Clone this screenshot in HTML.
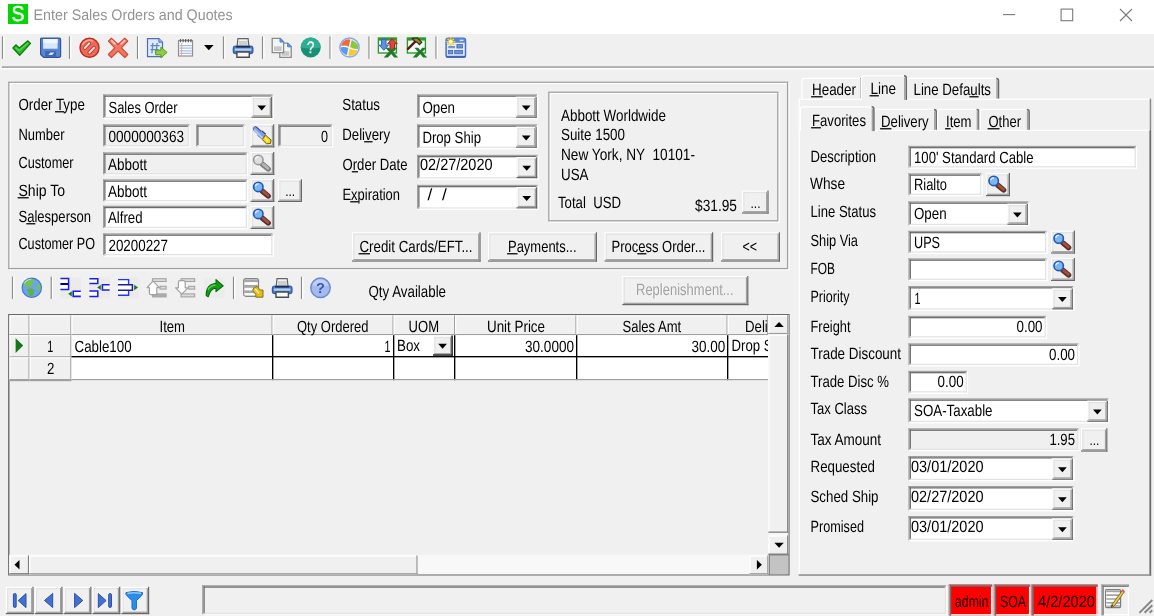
<!DOCTYPE html>
<html lang="en"><head><meta charset="utf-8"><title>Enter Sales Orders and Quotes</title>
<style>html,body{margin:0;padding:0;background:#f0f0f0;overflow:hidden}body{width:1154px;height:616px}svg{display:block;will-change:transform}svg text{font-family:"Liberation Sans",Arial,sans-serif;font-size:16.3px;white-space:pre;text-rendering:geometricPrecision}</style></head>
<body>
<svg width="1154" height="616" viewBox="0 0 1154 616">
<rect width="1154" height="616" fill="#f0f0f0"/>
<g id="titlebar">
<rect x="0" y="0" width="1154" height="34" fill="#ffffff"/>
<rect x="8" y="4" width="20" height="20" fill="#06d406"/>
<text x="18" y="21.2" textLength="13" lengthAdjust="spacingAndGlyphs" text-anchor="middle" fill="#fff" style="font-size:21.5px" stroke="#fff" stroke-width=".4">S</text>
<text x="33.6" y="20.3" textLength="199" lengthAdjust="spacingAndGlyphs" fill="#939393" style="font-size:15.3px">Enter Sales Orders and Quotes</text>
<path d="M1003 14.6 H1015.2" stroke="#7a7a7a" stroke-width="1.1" fill="none"/>
<rect x="1061.1" y="9.1" width="11.6" height="11.6" stroke="#7a7a7a" stroke-width="1.1" fill="none"/>
<path d="M1120 9 L1132 21 M1132 9 L1120 21" stroke="#7a7a7a" stroke-width="1.1" fill="none"/>
</g>
<g id="toolbar">
<rect x="1.9" y="66.2" width="1152.1" height="1.8" fill="#ababab"/>
<rect x="0" y="68" width="1154" height="1.25" fill="#fff"/>
<rect x="1.9" y="36.4" width="1.3" height="22.5" fill="#8e8e8e"/>
<rect x="3.2" y="36.4" width="1.25" height="22.5" fill="#fff"/>
<rect x="68.9" y="36.4" width="1.3" height="22.5" fill="#8e8e8e"/>
<rect x="70.2" y="36.4" width="1.25" height="22.5" fill="#fff"/>
<rect x="136.9" y="36.4" width="1.3" height="22.5" fill="#8e8e8e"/>
<rect x="138.2" y="36.4" width="1.25" height="22.5" fill="#fff"/>
<rect x="222.9" y="36.4" width="1.3" height="22.5" fill="#8e8e8e"/>
<rect x="224.2" y="36.4" width="1.25" height="22.5" fill="#fff"/>
<rect x="261.9" y="36.4" width="1.3" height="22.5" fill="#8e8e8e"/>
<rect x="263.2" y="36.4" width="1.25" height="22.5" fill="#fff"/>
<rect x="329.4" y="36.4" width="1.3" height="22.5" fill="#8e8e8e"/>
<rect x="330.7" y="36.4" width="1.25" height="22.5" fill="#fff"/>
<rect x="368.4" y="36.4" width="1.3" height="22.5" fill="#8e8e8e"/>
<rect x="369.7" y="36.4" width="1.25" height="22.5" fill="#fff"/>
<rect x="435.4" y="36.4" width="1.3" height="22.5" fill="#8e8e8e"/>
<rect x="436.7" y="36.4" width="1.25" height="22.5" fill="#fff"/>
<g transform="translate(11.5 39)">
<path d="M1.4 9 L4.4 5.8 L7.8 9 L16.4 1.8 L19 4.4 L8.2 16.4 Z" fill="#27b827" stroke="#0b7a0b" stroke-width="1.2" stroke-linejoin="round"/>
<path d="M4 8.6 L7.8 11.6 L16.4 4" fill="none" stroke="#6fe06f" stroke-width="1.4" opacity=".75"/>
</g>
<g transform="translate(40 37.5)">
<path d="M1.6 0.6 H19.4 Q20.6 0.6 20.6 1.8 V18.6 Q20.6 19.8 19.4 19.8 H3.6 L0.6 17 V1.8 Q0.6 0.6 1.6 0.6Z" fill="#5b84cf" stroke="#2f55a4" stroke-width="1.2"/>
<rect x="3.2" y="1.6" width="14.4" height="9.6" fill="#d6e9fb"/>
<rect x="3.2" y="1.6" width="14.4" height="4" fill="#eef6ff"/>
<rect x="5" y="13.6" width="11" height="6" rx="1" fill="#3f69b8"/>
<path d="M8.4 17.6 L10.4 15 H14.2 L12.2 17.6Z" fill="#dfeaf9"/>
</g>
<g transform="translate(79 37)">
<circle cx="10.5" cy="10.8" r="9.5" fill="#ec6a55" stroke="#bf2a1e" stroke-width="1.4"/>
<path d="M3.4 8 A7.6 7.6 0 0 1 14 4" fill="none" stroke="#f7a999" stroke-width="1.6"/>
<path d="M5.8 11 L10.2 6.4 M10.4 15.6 L15 10.8" stroke="#c5382b" stroke-width="3.8" stroke-linecap="round"/>
<path d="M5.8 11 L10.2 6.4 M10.4 15.6 L15 10.8" stroke="#f6e1dc" stroke-width="2" stroke-linecap="round"/>
</g>
<g transform="translate(108 37.3)">
<path d="M3.4 0.8 L10.1 7.2 L16.8 0.8 L19.8 3.8 L13.4 10.5 L19.8 17.2 L16.8 20.2 L10.1 13.8 L3.4 20.2 L0.4 17.2 L6.8 10.5 L0.4 3.8 Z" fill="#f27761" stroke="#d2483a" stroke-width="1.2" stroke-linejoin="round"/>
<path d="M3.6 3.4 L7 6.6 M16.6 3.4 L13.2 6.6" fill="none" stroke="#fcc9b9" stroke-width="1.8" stroke-linecap="round"/>
</g>
<g transform="translate(146.5 37.6)">
<path d="M1 1 H12.4 L16 4.6 V19 H1Z" fill="#dfe9f8" stroke="#4a70b6" stroke-width="1.2"/>
<path d="M12.4 1 V4.6 H16" fill="#9fbbe6" stroke="#4a70b6" stroke-width="1"/>
<path d="M4 8 H13 M4 12 H12 M6.4 5.4 L5.4 15.6 M10.6 5.4 L9.6 15.6" stroke="#5f86cf" stroke-width="1.3" fill="none"/>
<path d="M9.2 12.6 H14.4 V9.6 L20.6 14.8 L14.4 20.2 V17.2 H9.2Z" fill="#8fce3c" stroke="#5a9a1f" stroke-width="1"/>
</g>
<g transform="translate(177.5 38)">
<rect x="1" y="2.6" width="14" height="15.4" fill="#fdfdfd" stroke="#8f8f8f" stroke-width="1.2"/>
<path d="M3 1 V4.2 M5.6 1 V4.2 M8.2 1 V4.2 M10.8 1 V4.2 M13.4 1 V4.2" stroke="#5a5a5a" stroke-width="1.2"/>
<path d="M2 7.6 H14.2 M2 10.2 H14.2 M2 12.8 H14.2 M2 15.4 H14.2" stroke="#a9c0e6" stroke-width="1.3"/>
<path d="M4.2 5 V17.4" stroke="#eaa595" stroke-width="1"/>
</g>
<polygon points="204,45 213.6,45 208.8,50.2" fill="#000"/>
<g transform="translate(232.7 37.8)">
<path d="M5.2 0.8 H15.4 L16.2 8.6 H4.4Z" fill="#f2f2f2" stroke="#666" stroke-width="1.2"/>
<rect x="6" y="3.2" width="8.8" height="4.6" fill="#cfcfcf"/>
<rect x="0.6" y="8.2" width="19.6" height="7.6" rx="2.4" fill="#4b7fcc" stroke="#2d5ca8" stroke-width="1.2"/>
<path d="M3.4 9 H17.4" stroke="#1e2a44" stroke-width="1.5"/>
<rect x="2" y="10.8" width="16.8" height="2.2" rx="1" fill="#b4d0f4"/>
<path d="M4.2 14.2 H16.6 V19.4 H4.2Z" fill="#f8f8f8" stroke="#4a4a4a" stroke-width="1.4"/>
</g>
<g transform="translate(271.6 37.6)">
<path d="M8.2 5.6 h8 l3.4 3.4 v10.8 h-11.4Z" fill="#f4f4f4" stroke="#8a8a8a" stroke-width="1.3"/>
<rect x="10" y="13.6" width="7.6" height="4.6" fill="#c8c8c8"/>
<path d="M16 5.6 l3.6 3.6 h-3.6Z" fill="#5fa3f0" stroke="#3d86e0" stroke-width="1"/>
<path d="M0.6 0.8 h8 l3.4 3.4 v10.8 h-11.4Z" fill="#f4f4f4" stroke="#8a8a8a" stroke-width="1.3"/>
<rect x="2.4" y="8.8" width="7.6" height="4.6" fill="#c8c8c8"/>
<path d="M8.4 0.8 l3.6 3.6 h-3.6Z" fill="#5fa3f0" stroke="#3d86e0" stroke-width="1"/>
</g>
<g transform="translate(300.2 37)">
<circle cx="10.5" cy="10.5" r="10" fill="#189076"/>
<path d="M0.5 10.5 A10 10 0 0 1 20.5 10.5 Q10.5 12.6 0.5 10.5Z" fill="#2fae94"/>
<text x="10.5" y="16.4" style="font-size:16.5px" text-anchor="middle" textLength="7.4" lengthAdjust="spacingAndGlyphs" fill="#fff" stroke="#fff" stroke-width=".4" opacity=".92">?</text>
</g>
<g transform="translate(339 37)">
<circle cx="10.5" cy="10.5" r="9.6" fill="#f4f7fd" stroke="#8ea8e2" stroke-width="1.5"/>
<g transform="rotate(10 10.5 10.5)">
<path d="M3.2 5.6 Q6.6 2.2 10 2.6 L9.6 9.8 Q6 8.8 2 10.4 Q2 8 3.2 5.6Z" fill="#f26a3c"/>
<path d="M11.4 2.6 Q15 3.2 18 6.2 Q19.2 8.6 19 10.4 Q14.6 11.6 11 10Z" fill="#8ac83c"/>
<path d="M2 11.8 Q5.6 10.2 9.4 11.2 L9.2 18.6 Q4.8 17.8 2.8 14.8Z" fill="#5a9aea"/>
<path d="M10.8 11.4 Q14.4 12.8 19 11.8 Q18.2 16 14.8 18 Q12.4 18.8 10.6 18.6Z" fill="#f4cc30"/>
</g>
</g>
<g transform="translate(377.6 37.2)">
<rect x="0.8" y="0.8" width="18" height="15" fill="#f7fbf7" stroke="#2f9a2f" stroke-width="1.4"/>
<rect x="0.8" y="0.8" width="18" height="2.6" fill="#2f9a2f"/>
<path d="M4 2 H8.4 V8 H10.8 L6.2 13 L1.6 8 H4Z" fill="#5b93e0" stroke="#2f62b5" stroke-width="1"/>
<path d="M14.6 1.6 L19.6 6.6 H17 V12.6 H12.4 V6.6 H10Z" fill="#e0443c" stroke="#a61c1c" stroke-width="1"/>
<path d="M6 20.4 L11.4 14.6 L7.8 10.6 H11.6 L13.6 13 L15.8 10.6 H19.6 L15.6 14.8 L20.6 20.4 H16.6 L13.6 16.8 L10.2 20.4Z" fill="#1f7a2c"/>
</g>
<g transform="translate(406.6 37.2)">
<rect x="0.8" y="0.8" width="18" height="15" fill="#f7fbf7" stroke="#2f9a2f" stroke-width="1.4"/>
<rect x="0.8" y="0.8" width="18" height="2.6" fill="#2f9a2f"/>
<path d="M1.4 11.6 L9.6 3.4" stroke="#5a1a12" stroke-width="2.4" stroke-linecap="round"/>
<path d="M5.6 1.2 L10.6 0.6 L15.2 5 L12.8 7.4 L10.6 5.2 L8.6 4.4Z" fill="#8f8a2a" stroke="#2a2a10" stroke-width="1.1"/>
<path d="M6 20.4 L11.4 14.6 L7.8 10.6 H11.6 L13.6 13 L15.8 10.6 H19.6 L15.6 14.8 L20.6 20.4 H16.6 L13.6 16.8 L10.2 20.4Z" fill="#1f7a2c"/>
</g>
<g transform="translate(445.3 37.4)">
<rect x="0.8" y="0.8" width="19.4" height="19" rx="2" fill="#e4ecfa" stroke="#4a70c0" stroke-width="1.5"/>
<rect x="0.8" y="0.8" width="19.4" height="4.6" rx="1.6" fill="#5c84d4"/>
<path d="M14.4 3 H18.2" stroke="#dbe6fa" stroke-width="1.4"/>
<rect x="11.6" y="7.2" width="5.6" height="3.4" fill="#6f92d8" stroke="#3f66b8" stroke-width=".8"/>
<rect x="3" y="8.6" width="6.6" height="2.2" fill="#6f92d8"/>
<rect x="3" y="13" width="4.4" height="3.4" fill="#6f92d8" stroke="#3f66b8" stroke-width=".8"/>
<rect x="9.4" y="13" width="7.8" height="3.4" fill="#6f92d8" stroke="#3f66b8" stroke-width=".8"/>
<path d="M0.8 19.2 H20.2" stroke="#3f62ae" stroke-width="1.6"/>
<path d="M5.4 0 V8.4 M1 4.4 H10 M2.2 1.4 L8.6 7.4 M8.6 1.4 L2.2 7.4" stroke="#f6d21c" stroke-width="1.5"/>
<circle cx="5.4" cy="4.4" r="1.9" fill="#fffbe0"/>
</g>
</g>
<g id="order-header">
<rect x="10.07" y="83.47" width="778.75" height="186.35" fill="none" stroke="#fff" stroke-width="1.25"/>
<rect x="8.82" y="82.22" width="778.75" height="186.35" fill="none" stroke="#a0a0a0" stroke-width="1.25"/>
<text x="18.5" y="110" textLength="66.3" lengthAdjust="spacingAndGlyphs">Order Type</text>
<rect x="55.05" y="111.15" width="9.2" height="1.25" fill="#000"/>
<text x="18.5" y="140" textLength="46" lengthAdjust="spacingAndGlyphs">Number</text>
<text x="18.5" y="167.5" textLength="55" lengthAdjust="spacingAndGlyphs">Customer</text>
<text x="18.5" y="195.5" textLength="46.5" lengthAdjust="spacingAndGlyphs">Ship To</text>
<rect x="17.6" y="197.15" width="11.16" height="1.25" fill="#000"/>
<text x="18.5" y="222" textLength="72.5" lengthAdjust="spacingAndGlyphs">Salesperson</text>
<rect x="26.3" y="223.15" width="9.06" height="1.25" fill="#000"/>
<text x="18.5" y="248.8" textLength="76.5" lengthAdjust="spacingAndGlyphs">Customer PO</text>
<rect x="103" y="94.3" width="170.75" height="24.95" fill="#fff"/>
<rect x="103" y="94.3" width="170.75" height="1.25" fill="#a0a0a0"/>
<rect x="103" y="94.3" width="1.25" height="24.95" fill="#a0a0a0"/>
<rect x="103" y="118" width="170.75" height="1.25" fill="#ffffff"/>
<rect x="272.5" y="94.3" width="1.25" height="24.95" fill="#ffffff"/>
<rect x="104.25" y="95.55" width="168.25" height="1.25" fill="#696969"/>
<rect x="104.25" y="95.55" width="1.25" height="22.45" fill="#696969"/>
<rect x="104.25" y="116.75" width="168.25" height="1.25" fill="#e3e3e3"/>
<rect x="271.25" y="95.55" width="1.25" height="22.45" fill="#e3e3e3"/>
<rect x="251.6" y="96.8" width="20.6" height="21" fill="#f0f0f0"/>
<rect x="251.6" y="96.8" width="20.6" height="1.25" fill="#ffffff"/>
<rect x="251.6" y="96.8" width="1.25" height="21" fill="#ffffff"/>
<rect x="251.6" y="116.55" width="20.6" height="1.25" fill="#696969"/>
<rect x="270.95" y="96.8" width="1.25" height="21" fill="#696969"/>
<rect x="252.85" y="98.05" width="18.1" height="1.25" fill="#e3e3e3"/>
<rect x="252.85" y="98.05" width="1.25" height="18.5" fill="#e3e3e3"/>
<rect x="252.85" y="115.3" width="18.1" height="1.25" fill="#a0a0a0"/>
<rect x="269.7" y="98.05" width="1.25" height="18.5" fill="#a0a0a0"/>
<polygon points="257.32,105.4 266.07,105.4 261.7,110.4" fill="#000"/>
<text x="108.5" y="113" textLength="69" lengthAdjust="spacingAndGlyphs">Sales Order</text>
<rect x="103" y="124.3" width="87.4" height="23.2" fill="#f0f0f0"/>
<rect x="103" y="124.3" width="87.4" height="1.25" fill="#a0a0a0"/>
<rect x="103" y="124.3" width="1.25" height="23.2" fill="#a0a0a0"/>
<rect x="103" y="146.25" width="87.4" height="1.25" fill="#ffffff"/>
<rect x="189.15" y="124.3" width="1.25" height="23.2" fill="#ffffff"/>
<rect x="104.25" y="125.55" width="84.9" height="1.25" fill="#696969"/>
<rect x="104.25" y="125.55" width="1.25" height="20.7" fill="#696969"/>
<rect x="104.25" y="145" width="84.9" height="1.25" fill="#e3e3e3"/>
<rect x="187.9" y="125.55" width="1.25" height="20.7" fill="#e3e3e3"/>
<text x="108.5" y="141.6" textLength="75.5" lengthAdjust="spacingAndGlyphs">0000000363</text>
<rect x="196" y="124.3" width="49.4" height="23.2" fill="#f0f0f0"/>
<rect x="196" y="124.3" width="49.4" height="1.25" fill="#a0a0a0"/>
<rect x="196" y="124.3" width="1.25" height="23.2" fill="#a0a0a0"/>
<rect x="196" y="146.25" width="49.4" height="1.25" fill="#ffffff"/>
<rect x="244.15" y="124.3" width="1.25" height="23.2" fill="#ffffff"/>
<rect x="197.25" y="125.55" width="46.9" height="1.25" fill="#696969"/>
<rect x="197.25" y="125.55" width="1.25" height="20.7" fill="#696969"/>
<rect x="197.25" y="145" width="46.9" height="1.25" fill="#e3e3e3"/>
<rect x="242.9" y="125.55" width="1.25" height="20.7" fill="#e3e3e3"/>
<rect x="250.6" y="124.3" width="23.7" height="23.1" fill="#f0f0f0"/>
<rect x="250.6" y="124.3" width="23.7" height="1.25" fill="#ffffff"/>
<rect x="250.6" y="124.3" width="1.25" height="23.1" fill="#ffffff"/>
<rect x="250.6" y="146.15" width="23.7" height="1.25" fill="#696969"/>
<rect x="273.05" y="124.3" width="1.25" height="23.1" fill="#696969"/>
<rect x="251.85" y="125.55" width="21.2" height="1.25" fill="#e3e3e3"/>
<rect x="251.85" y="125.55" width="1.25" height="20.6" fill="#e3e3e3"/>
<rect x="251.85" y="144.9" width="21.2" height="1.25" fill="#a0a0a0"/>
<rect x="271.8" y="125.55" width="1.25" height="20.6" fill="#a0a0a0"/>
<g transform="translate(250.9 124.25)">
<path d="M4.6 4.6 L8.6 8.4" stroke="#2c3f78" stroke-width="5" stroke-linecap="round"/>
<path d="M8.8 8.6 L13 12.2" stroke="#2c3f78" stroke-width="7" stroke-linecap="butt"/>
<path d="M4.4 4.8 L8.4 8.6" stroke="#7f9fe2" stroke-width="3.8" stroke-linecap="round"/>
<path d="M8.4 9 L12.6 12.6" stroke="#7f9fe2" stroke-width="5.8" stroke-linecap="butt"/>
<path d="M3.8 5.8 L11.4 13.4" stroke="#b9cdf4" stroke-width="1.6" stroke-linecap="round"/>
<path d="M14.6 10.8 L20.2 15.8 L19.6 19.2 L15.6 19.6 L11.4 15.2Z" fill="#f8d80c" stroke="#5a4a10" stroke-width=".9" stroke-linejoin="round"/>
<path d="M14.4 14 L17.4 17.4" stroke="#fff27a" stroke-width="1.6"/>
</g>
<rect x="278" y="124.3" width="55.2" height="23.2" fill="#f0f0f0"/>
<rect x="278" y="124.3" width="55.2" height="1.25" fill="#a0a0a0"/>
<rect x="278" y="124.3" width="1.25" height="23.2" fill="#a0a0a0"/>
<rect x="278" y="146.25" width="55.2" height="1.25" fill="#ffffff"/>
<rect x="331.95" y="124.3" width="1.25" height="23.2" fill="#ffffff"/>
<rect x="279.25" y="125.55" width="52.7" height="1.25" fill="#696969"/>
<rect x="279.25" y="125.55" width="1.25" height="20.7" fill="#696969"/>
<rect x="279.25" y="145" width="52.7" height="1.25" fill="#e3e3e3"/>
<rect x="330.7" y="125.55" width="1.25" height="20.7" fill="#e3e3e3"/>
<text x="321" y="141.6" textLength="7" lengthAdjust="spacingAndGlyphs">0</text>
<rect x="103" y="152.3" width="145.2" height="23.2" fill="#f0f0f0"/>
<rect x="103" y="152.3" width="145.2" height="1.25" fill="#a0a0a0"/>
<rect x="103" y="152.3" width="1.25" height="23.2" fill="#a0a0a0"/>
<rect x="103" y="174.25" width="145.2" height="1.25" fill="#ffffff"/>
<rect x="246.95" y="152.3" width="1.25" height="23.2" fill="#ffffff"/>
<rect x="104.25" y="153.55" width="142.7" height="1.25" fill="#696969"/>
<rect x="104.25" y="153.55" width="1.25" height="20.7" fill="#696969"/>
<rect x="104.25" y="173" width="142.7" height="1.25" fill="#e3e3e3"/>
<rect x="245.7" y="153.55" width="1.25" height="20.7" fill="#e3e3e3"/>
<text x="108" y="169.6" textLength="39" lengthAdjust="spacingAndGlyphs">Abbott</text>
<rect x="250.6" y="152" width="23.7" height="23" fill="#f0f0f0"/>
<rect x="250.6" y="152" width="23.7" height="1.25" fill="#ffffff"/>
<rect x="250.6" y="152" width="1.25" height="23" fill="#ffffff"/>
<rect x="250.6" y="173.75" width="23.7" height="1.25" fill="#696969"/>
<rect x="273.05" y="152" width="1.25" height="23" fill="#696969"/>
<rect x="251.85" y="153.25" width="21.2" height="1.25" fill="#e3e3e3"/>
<rect x="251.85" y="153.25" width="1.25" height="20.5" fill="#e3e3e3"/>
<rect x="251.85" y="172.5" width="21.2" height="1.25" fill="#a0a0a0"/>
<rect x="271.8" y="153.25" width="1.25" height="20.5" fill="#a0a0a0"/>
<g transform="translate(250.6 152)">
<path d="M12 12.4 L17.6 17" stroke="#7c7c7c" stroke-width="5.4" stroke-linecap="round"/>
<path d="M12.6 12.4 L17.4 16.4" stroke="#b4b4b4" stroke-width="2.8" stroke-linecap="round"/>
<circle cx="7.7" cy="7.9" r="4.7" fill="#dedede" stroke="#989898" stroke-width="1.6"/>
<path d="M4.8 7.4 A3 3 0 0 1 8 4.8" stroke="#fff" stroke-width="1.3" fill="none" opacity=".75"/>
</g>
<rect x="103" y="179.3" width="145.2" height="23.2" fill="#fff"/>
<rect x="103" y="179.3" width="145.2" height="1.25" fill="#a0a0a0"/>
<rect x="103" y="179.3" width="1.25" height="23.2" fill="#a0a0a0"/>
<rect x="103" y="201.25" width="145.2" height="1.25" fill="#ffffff"/>
<rect x="246.95" y="179.3" width="1.25" height="23.2" fill="#ffffff"/>
<rect x="104.25" y="180.55" width="142.7" height="1.25" fill="#696969"/>
<rect x="104.25" y="180.55" width="1.25" height="20.7" fill="#696969"/>
<rect x="104.25" y="200" width="142.7" height="1.25" fill="#e3e3e3"/>
<rect x="245.7" y="180.55" width="1.25" height="20.7" fill="#e3e3e3"/>
<text x="108" y="197" textLength="39" lengthAdjust="spacingAndGlyphs">Abbott</text>
<rect x="250.6" y="179" width="23.7" height="23" fill="#f0f0f0"/>
<rect x="250.6" y="179" width="23.7" height="1.25" fill="#ffffff"/>
<rect x="250.6" y="179" width="1.25" height="23" fill="#ffffff"/>
<rect x="250.6" y="200.75" width="23.7" height="1.25" fill="#696969"/>
<rect x="273.05" y="179" width="1.25" height="23" fill="#696969"/>
<rect x="251.85" y="180.25" width="21.2" height="1.25" fill="#e3e3e3"/>
<rect x="251.85" y="180.25" width="1.25" height="20.5" fill="#e3e3e3"/>
<rect x="251.85" y="199.5" width="21.2" height="1.25" fill="#a0a0a0"/>
<rect x="271.8" y="180.25" width="1.25" height="20.5" fill="#a0a0a0"/>
<g transform="translate(250.6 179)">
<path d="M12 12.4 L17.6 17" stroke="#5e2d25" stroke-width="5.4" stroke-linecap="round"/>
<path d="M12.6 12.4 L17.4 16.4" stroke="#a0503f" stroke-width="2.8" stroke-linecap="round"/>
<circle cx="7.7" cy="7.9" r="4.7" fill="#7ab6f2" stroke="#2458b0" stroke-width="1.6"/>
<path d="M4.8 7.4 A3 3 0 0 1 8 4.8" stroke="#fff" stroke-width="1.3" fill="none" opacity=".75"/>
</g>
<rect x="278" y="179.3" width="24" height="22.7" fill="#f0f0f0"/>
<rect x="278" y="179.3" width="24" height="1.25" fill="#ffffff"/>
<rect x="278" y="179.3" width="1.25" height="22.7" fill="#ffffff"/>
<rect x="278" y="200.75" width="24" height="1.25" fill="#696969"/>
<rect x="300.75" y="179.3" width="1.25" height="22.7" fill="#696969"/>
<rect x="279.25" y="180.55" width="21.5" height="1.25" fill="#e3e3e3"/>
<rect x="279.25" y="180.55" width="1.25" height="20.2" fill="#e3e3e3"/>
<rect x="279.25" y="199.5" width="21.5" height="1.25" fill="#a0a0a0"/>
<rect x="299.5" y="180.55" width="1.25" height="20.2" fill="#a0a0a0"/>
<text x="290.2" y="196.05" textLength="10" lengthAdjust="spacingAndGlyphs" text-anchor="middle" style="font-size:14px">...</text>
<rect x="103" y="205.7" width="145.2" height="23.6" fill="#fff"/>
<rect x="103" y="205.7" width="145.2" height="1.25" fill="#a0a0a0"/>
<rect x="103" y="205.7" width="1.25" height="23.6" fill="#a0a0a0"/>
<rect x="103" y="228.05" width="145.2" height="1.25" fill="#ffffff"/>
<rect x="246.95" y="205.7" width="1.25" height="23.6" fill="#ffffff"/>
<rect x="104.25" y="206.95" width="142.7" height="1.25" fill="#696969"/>
<rect x="104.25" y="206.95" width="1.25" height="21.1" fill="#696969"/>
<rect x="104.25" y="226.8" width="142.7" height="1.25" fill="#e3e3e3"/>
<rect x="245.7" y="206.95" width="1.25" height="21.1" fill="#e3e3e3"/>
<text x="108" y="223" textLength="34.5" lengthAdjust="spacingAndGlyphs">Alfred</text>
<rect x="250.6" y="206" width="23.7" height="23" fill="#f0f0f0"/>
<rect x="250.6" y="206" width="23.7" height="1.25" fill="#ffffff"/>
<rect x="250.6" y="206" width="1.25" height="23" fill="#ffffff"/>
<rect x="250.6" y="227.75" width="23.7" height="1.25" fill="#696969"/>
<rect x="273.05" y="206" width="1.25" height="23" fill="#696969"/>
<rect x="251.85" y="207.25" width="21.2" height="1.25" fill="#e3e3e3"/>
<rect x="251.85" y="207.25" width="1.25" height="20.5" fill="#e3e3e3"/>
<rect x="251.85" y="226.5" width="21.2" height="1.25" fill="#a0a0a0"/>
<rect x="271.8" y="207.25" width="1.25" height="20.5" fill="#a0a0a0"/>
<g transform="translate(250.6 206)">
<path d="M12 12.4 L17.6 17" stroke="#5e2d25" stroke-width="5.4" stroke-linecap="round"/>
<path d="M12.6 12.4 L17.4 16.4" stroke="#a0503f" stroke-width="2.8" stroke-linecap="round"/>
<circle cx="7.7" cy="7.9" r="4.7" fill="#7ab6f2" stroke="#2458b0" stroke-width="1.6"/>
<path d="M4.8 7.4 A3 3 0 0 1 8 4.8" stroke="#fff" stroke-width="1.3" fill="none" opacity=".75"/>
</g>
<rect x="103" y="233.3" width="170.7" height="23.2" fill="#fff"/>
<rect x="103" y="233.3" width="170.7" height="1.25" fill="#a0a0a0"/>
<rect x="103" y="233.3" width="1.25" height="23.2" fill="#a0a0a0"/>
<rect x="103" y="255.25" width="170.7" height="1.25" fill="#ffffff"/>
<rect x="272.45" y="233.3" width="1.25" height="23.2" fill="#ffffff"/>
<rect x="104.25" y="234.55" width="168.2" height="1.25" fill="#696969"/>
<rect x="104.25" y="234.55" width="1.25" height="20.7" fill="#696969"/>
<rect x="104.25" y="254" width="168.2" height="1.25" fill="#e3e3e3"/>
<rect x="271.2" y="234.55" width="1.25" height="20.7" fill="#e3e3e3"/>
<text x="108.5" y="250.6" textLength="59.5" lengthAdjust="spacingAndGlyphs">20200227</text>
<text x="342.3" y="110" textLength="37.7" lengthAdjust="spacingAndGlyphs">Status</text>
<text x="342.3" y="140.3" textLength="47.7" lengthAdjust="spacingAndGlyphs">Delivery</text>
<rect x="364.15" y="141.15" width="8.42" height="1.25" fill="#000"/>
<text x="342.5" y="170" textLength="65" lengthAdjust="spacingAndGlyphs">Order Date</text>
<rect x="351.81" y="171.15" width="6.19" height="1.25" fill="#000"/>
<text x="342.5" y="200" textLength="57.5" lengthAdjust="spacingAndGlyphs">Expiration</text>
<rect x="350.22" y="201.15" width="8.28" height="1.25" fill="#000"/>
<rect x="417" y="94.3" width="121.25" height="24.95" fill="#fff"/>
<rect x="417" y="94.3" width="121.25" height="1.25" fill="#a0a0a0"/>
<rect x="417" y="94.3" width="1.25" height="24.95" fill="#a0a0a0"/>
<rect x="417" y="118" width="121.25" height="1.25" fill="#ffffff"/>
<rect x="537" y="94.3" width="1.25" height="24.95" fill="#ffffff"/>
<rect x="418.25" y="95.55" width="118.75" height="1.25" fill="#696969"/>
<rect x="418.25" y="95.55" width="1.25" height="22.45" fill="#696969"/>
<rect x="418.25" y="116.75" width="118.75" height="1.25" fill="#e3e3e3"/>
<rect x="535.75" y="95.55" width="1.25" height="22.45" fill="#e3e3e3"/>
<rect x="516.1" y="96.8" width="20.6" height="21" fill="#f0f0f0"/>
<rect x="516.1" y="96.8" width="20.6" height="1.25" fill="#ffffff"/>
<rect x="516.1" y="96.8" width="1.25" height="21" fill="#ffffff"/>
<rect x="516.1" y="116.55" width="20.6" height="1.25" fill="#696969"/>
<rect x="535.45" y="96.8" width="1.25" height="21" fill="#696969"/>
<rect x="517.35" y="98.05" width="18.1" height="1.25" fill="#e3e3e3"/>
<rect x="517.35" y="98.05" width="1.25" height="18.5" fill="#e3e3e3"/>
<rect x="517.35" y="115.3" width="18.1" height="1.25" fill="#a0a0a0"/>
<rect x="534.2" y="98.05" width="1.25" height="18.5" fill="#a0a0a0"/>
<polygon points="521.83,105.4 530.58,105.4 526.2,110.4" fill="#000"/>
<text x="422.4" y="113" textLength="32.6" lengthAdjust="spacingAndGlyphs">Open</text>
<rect x="417" y="124.3" width="121.25" height="24.95" fill="#fff"/>
<rect x="417" y="124.3" width="121.25" height="1.25" fill="#a0a0a0"/>
<rect x="417" y="124.3" width="1.25" height="24.95" fill="#a0a0a0"/>
<rect x="417" y="148" width="121.25" height="1.25" fill="#ffffff"/>
<rect x="537" y="124.3" width="1.25" height="24.95" fill="#ffffff"/>
<rect x="418.25" y="125.55" width="118.75" height="1.25" fill="#696969"/>
<rect x="418.25" y="125.55" width="1.25" height="22.45" fill="#696969"/>
<rect x="418.25" y="146.75" width="118.75" height="1.25" fill="#e3e3e3"/>
<rect x="535.75" y="125.55" width="1.25" height="22.45" fill="#e3e3e3"/>
<rect x="516.1" y="126.8" width="20.6" height="21" fill="#f0f0f0"/>
<rect x="516.1" y="126.8" width="20.6" height="1.25" fill="#ffffff"/>
<rect x="516.1" y="126.8" width="1.25" height="21" fill="#ffffff"/>
<rect x="516.1" y="146.55" width="20.6" height="1.25" fill="#696969"/>
<rect x="535.45" y="126.8" width="1.25" height="21" fill="#696969"/>
<rect x="517.35" y="128.05" width="18.1" height="1.25" fill="#e3e3e3"/>
<rect x="517.35" y="128.05" width="1.25" height="18.5" fill="#e3e3e3"/>
<rect x="517.35" y="145.3" width="18.1" height="1.25" fill="#a0a0a0"/>
<rect x="534.2" y="128.05" width="1.25" height="18.5" fill="#a0a0a0"/>
<polygon points="521.83,135.4 530.58,135.4 526.2,140.4" fill="#000"/>
<text x="422.4" y="143" textLength="58.6" lengthAdjust="spacingAndGlyphs">Drop Ship</text>
<rect x="417" y="154.8" width="121.75" height="24.85" fill="#fff"/>
<rect x="417" y="154.8" width="121.75" height="1.25" fill="#a0a0a0"/>
<rect x="417" y="154.8" width="1.25" height="24.85" fill="#a0a0a0"/>
<rect x="417" y="178.4" width="121.75" height="1.25" fill="#ffffff"/>
<rect x="537.5" y="154.8" width="1.25" height="24.85" fill="#ffffff"/>
<rect x="418.25" y="156.05" width="119.25" height="1.25" fill="#696969"/>
<rect x="418.25" y="156.05" width="1.25" height="22.35" fill="#696969"/>
<rect x="418.25" y="177.15" width="119.25" height="1.25" fill="#e3e3e3"/>
<rect x="536.25" y="156.05" width="1.25" height="22.35" fill="#e3e3e3"/>
<rect x="516.6" y="157.3" width="20.6" height="20.9" fill="#f0f0f0"/>
<rect x="516.6" y="157.3" width="20.6" height="1.25" fill="#ffffff"/>
<rect x="516.6" y="157.3" width="1.25" height="20.9" fill="#ffffff"/>
<rect x="516.6" y="176.95" width="20.6" height="1.25" fill="#696969"/>
<rect x="535.95" y="157.3" width="1.25" height="20.9" fill="#696969"/>
<rect x="517.85" y="158.55" width="18.1" height="1.25" fill="#e3e3e3"/>
<rect x="517.85" y="158.55" width="1.25" height="18.4" fill="#e3e3e3"/>
<rect x="517.85" y="175.7" width="18.1" height="1.25" fill="#a0a0a0"/>
<rect x="534.7" y="158.55" width="1.25" height="18.4" fill="#a0a0a0"/>
<polygon points="522.33,165.85 531.08,165.85 526.7,170.85" fill="#000"/>
<text x="420" y="170" textLength="72.5" lengthAdjust="spacingAndGlyphs">02/27/2020</text>
<rect x="417" y="184.8" width="121.75" height="25.05" fill="#fff"/>
<rect x="417" y="184.8" width="121.75" height="1.25" fill="#a0a0a0"/>
<rect x="417" y="184.8" width="1.25" height="25.05" fill="#a0a0a0"/>
<rect x="417" y="208.6" width="121.75" height="1.25" fill="#ffffff"/>
<rect x="537.5" y="184.8" width="1.25" height="25.05" fill="#ffffff"/>
<rect x="418.25" y="186.05" width="119.25" height="1.25" fill="#696969"/>
<rect x="418.25" y="186.05" width="1.25" height="22.55" fill="#696969"/>
<rect x="418.25" y="207.35" width="119.25" height="1.25" fill="#e3e3e3"/>
<rect x="536.25" y="186.05" width="1.25" height="22.55" fill="#e3e3e3"/>
<rect x="516.6" y="187.3" width="20.6" height="21.1" fill="#f0f0f0"/>
<rect x="516.6" y="187.3" width="20.6" height="1.25" fill="#ffffff"/>
<rect x="516.6" y="187.3" width="1.25" height="21.1" fill="#ffffff"/>
<rect x="516.6" y="207.15" width="20.6" height="1.25" fill="#696969"/>
<rect x="535.95" y="187.3" width="1.25" height="21.1" fill="#696969"/>
<rect x="517.85" y="188.55" width="18.1" height="1.25" fill="#e3e3e3"/>
<rect x="517.85" y="188.55" width="1.25" height="18.6" fill="#e3e3e3"/>
<rect x="517.85" y="205.9" width="18.1" height="1.25" fill="#a0a0a0"/>
<rect x="534.7" y="188.55" width="1.25" height="18.6" fill="#a0a0a0"/>
<polygon points="522.33,195.95 531.08,195.95 526.7,200.95" fill="#000"/>
<text x="427.6" y="200" textLength="19.2" lengthAdjust="spacingAndGlyphs" xml:space="preserve">/  /</text>
<rect x="550.08" y="93.47" width="228.95" height="128.55" fill="none" stroke="#fff" stroke-width="1.25"/>
<rect x="548.83" y="92.22" width="228.95" height="128.55" fill="none" stroke="#a0a0a0" stroke-width="1.25"/>
<text x="561" y="120.5" textLength="105" lengthAdjust="spacingAndGlyphs">Abbott Worldwide</text>
<text x="561" y="140" textLength="64" lengthAdjust="spacingAndGlyphs">Suite 1500</text>
<text x="561" y="160" textLength="134" lengthAdjust="spacingAndGlyphs" xml:space="preserve">New York, NY  10101-</text>
<text x="561" y="180" textLength="27.5" lengthAdjust="spacingAndGlyphs">USA</text>
<text x="558" y="207.5" textLength="63" lengthAdjust="spacingAndGlyphs" xml:space="preserve">Total  USD</text>
<text x="695" y="211" textLength="42" lengthAdjust="spacingAndGlyphs">$31.95</text>
<rect x="742" y="190.6" width="26.6" height="23" fill="#f0f0f0"/>
<rect x="742" y="190.6" width="26.6" height="1.25" fill="#ffffff"/>
<rect x="742" y="190.6" width="1.25" height="23" fill="#ffffff"/>
<rect x="742" y="212.35" width="26.6" height="1.25" fill="#696969"/>
<rect x="767.35" y="190.6" width="1.25" height="23" fill="#696969"/>
<rect x="743.25" y="191.85" width="24.1" height="1.25" fill="#e3e3e3"/>
<rect x="743.25" y="191.85" width="1.25" height="20.5" fill="#e3e3e3"/>
<rect x="743.25" y="211.1" width="24.1" height="1.25" fill="#a0a0a0"/>
<rect x="766.1" y="191.85" width="1.25" height="20.5" fill="#a0a0a0"/>
<text x="755.5" y="207.5" textLength="10" lengthAdjust="spacingAndGlyphs" text-anchor="middle" style="font-size:14px">...</text>
<rect x="352" y="232.3" width="128.6" height="29.3" fill="#f0f0f0"/>
<rect x="352" y="232.3" width="128.6" height="1.25" fill="#ffffff"/>
<rect x="352" y="232.3" width="1.25" height="29.3" fill="#ffffff"/>
<rect x="352" y="260.35" width="128.6" height="1.25" fill="#696969"/>
<rect x="479.35" y="232.3" width="1.25" height="29.3" fill="#696969"/>
<rect x="353.25" y="233.55" width="126.1" height="1.25" fill="#e3e3e3"/>
<rect x="353.25" y="233.55" width="1.25" height="26.8" fill="#e3e3e3"/>
<rect x="353.25" y="259.1" width="126.1" height="1.25" fill="#a0a0a0"/>
<rect x="478.1" y="233.55" width="1.25" height="26.8" fill="#a0a0a0"/>
<text x="359.5" y="252.15" textLength="113" lengthAdjust="spacingAndGlyphs">Credit Cards/EFT...</text>
<rect x="358.6" y="253.15" width="11.4" height="1.25" fill="#000"/>
<rect x="488" y="232.3" width="109" height="29.3" fill="#f0f0f0"/>
<rect x="488" y="232.3" width="109" height="1.25" fill="#ffffff"/>
<rect x="488" y="232.3" width="1.25" height="29.3" fill="#ffffff"/>
<rect x="488" y="260.35" width="109" height="1.25" fill="#696969"/>
<rect x="595.75" y="232.3" width="1.25" height="29.3" fill="#696969"/>
<rect x="489.25" y="233.55" width="106.5" height="1.25" fill="#e3e3e3"/>
<rect x="489.25" y="233.55" width="1.25" height="26.8" fill="#e3e3e3"/>
<rect x="489.25" y="259.1" width="106.5" height="1.25" fill="#a0a0a0"/>
<rect x="594.5" y="233.55" width="1.25" height="26.8" fill="#a0a0a0"/>
<text x="508" y="252.15" textLength="68.5" lengthAdjust="spacingAndGlyphs">Payments...</text>
<rect x="507.1" y="253.15" width="10.47" height="1.25" fill="#000"/>
<rect x="604.5" y="232.3" width="108.7" height="29.3" fill="#f0f0f0"/>
<rect x="604.5" y="232.3" width="108.7" height="1.25" fill="#ffffff"/>
<rect x="604.5" y="232.3" width="1.25" height="29.3" fill="#ffffff"/>
<rect x="604.5" y="260.35" width="108.7" height="1.25" fill="#696969"/>
<rect x="711.95" y="232.3" width="1.25" height="29.3" fill="#696969"/>
<rect x="605.75" y="233.55" width="106.2" height="1.25" fill="#e3e3e3"/>
<rect x="605.75" y="233.55" width="1.25" height="26.8" fill="#e3e3e3"/>
<rect x="605.75" y="259.1" width="106.2" height="1.25" fill="#a0a0a0"/>
<rect x="710.7" y="233.55" width="1.25" height="26.8" fill="#a0a0a0"/>
<text x="611.5" y="252.15" textLength="94" lengthAdjust="spacingAndGlyphs">Process Order...</text>
<rect x="637.34" y="253.15" width="9.05" height="1.25" fill="#000"/>
<rect x="721" y="232.3" width="59" height="29.3" fill="#f0f0f0"/>
<rect x="721" y="232.3" width="59" height="1.25" fill="#ffffff"/>
<rect x="721" y="232.3" width="1.25" height="29.3" fill="#ffffff"/>
<rect x="721" y="260.35" width="59" height="1.25" fill="#696969"/>
<rect x="778.75" y="232.3" width="1.25" height="29.3" fill="#696969"/>
<rect x="722.25" y="233.55" width="56.5" height="1.25" fill="#e3e3e3"/>
<rect x="722.25" y="233.55" width="1.25" height="26.8" fill="#e3e3e3"/>
<rect x="722.25" y="259.1" width="56.5" height="1.25" fill="#a0a0a0"/>
<rect x="777.5" y="233.55" width="1.25" height="26.8" fill="#a0a0a0"/>
<text x="742.5" y="252.15" textLength="14.5" lengthAdjust="spacingAndGlyphs">&lt;&lt;</text>
</g>
<g id="line-toolbar">
<rect x="11.9" y="276.6" width="1.3" height="22.4" fill="#8e8e8e"/>
<rect x="13.2" y="276.6" width="1.25" height="22.4" fill="#fff"/>
<rect x="50.6" y="276.6" width="1.3" height="22.4" fill="#8e8e8e"/>
<rect x="51.9" y="276.6" width="1.25" height="22.4" fill="#fff"/>
<rect x="232.9" y="276.6" width="1.3" height="22.4" fill="#8e8e8e"/>
<rect x="234.2" y="276.6" width="1.25" height="22.4" fill="#fff"/>
<rect x="300.9" y="276.6" width="1.3" height="22.4" fill="#8e8e8e"/>
<rect x="302.2" y="276.6" width="1.25" height="22.4" fill="#fff"/>
<g transform="translate(21.3 277.3)">
<circle cx="10.5" cy="10.5" r="9.7" fill="#6ea2ee" stroke="#3f74d2" stroke-width="1.1"/>
<path d="M4.4 3.6 Q8 1 12 1.8 L13.4 4.4 L10.6 5.6 L11.6 8.4 L8.4 10 L5.6 8.6 L3 9.4 L2 6.8Z" fill="#72c64e"/>
<path d="M6.2 11.6 L10.4 11 L13 13.2 L12.2 17 L9.6 19.4 L7.2 17.6 L7.4 14.6 L5.4 13Z" fill="#5cb440"/>
<path d="M15.6 6.4 L18.8 7.6 L19.4 11.6 L17 13.6 L15.4 10.6Z" fill="#72c64e"/>
<path d="M2.8 6.2 A9 9 0 0 1 10 1.8" stroke="#cfe3fb" stroke-width="1.2" fill="none" opacity=".7"/>
</g>
<g transform="translate(60 277.6)">
<rect x="0" y="0" width="21" height="20.6" fill="#e7e7e7" opacity=".6"/>
<rect x="0.4" y="1" width="8.2" height="10.8" fill="#fff"/>
<path d="M0.4 1 H8.6 V11.8 H0.4" fill="none" stroke="#1c1cf0" stroke-width="1.5"/>
<path d="M0.4 6.4 H8.2" stroke="#00007a" stroke-width="2"/>
<rect x="13.2" y="13.8" width="7.6" height="4.8" fill="#fff"/>
<path d="M20.8 13.6 H13.2 V18.8 H20.8" fill="none" stroke="#1c1cf0" stroke-width="1.6"/>
<path d="M8.2 16.2 L11.8 13.6 V18.8Z" fill="#157a15"/>
</g>
<g transform="translate(89 277.6)">
<rect x="0" y="0" width="21" height="20.6" fill="#e7e7e7" opacity=".6"/>
<rect x="0.4" y="1.2" width="8.4" height="4.8" fill="#fff"/><rect x="0.4" y="13.6" width="8.4" height="5" fill="#fff"/>
<path d="M0.4 1.2 H8.8 V6 H0.4 M0.4 13.4 H8.8 V18.8 H0.4" fill="none" stroke="#1c1cf0" stroke-width="1.5"/>
<rect x="13.4" y="7.4" width="7.2" height="4.8" fill="#fff"/>
<path d="M20.6 7.2 H13.4 V12.4 H20.6" fill="none" stroke="#1c1cf0" stroke-width="1.6"/>
<path d="M8.2 9.8 L11.8 7.2 V12.4Z" fill="#157a15"/>
</g>
<g transform="translate(118 277.6)">
<rect x="0" y="0" width="21" height="20.6" fill="#e7e7e7" opacity=".6"/>
<rect x="0" y="2" width="10.6" height="15.6" fill="#fff"/>
<path d="M0 2 H10.6 V17.6 H0" fill="none" stroke="#2436f0" stroke-width="1.4"/>
<rect x="0" y="7.4" width="14.4" height="5" fill="#fff"/>
<path d="M0 7.2 H14.4 V12.6 H0" fill="none" stroke="#1a1e9e" stroke-width="1.5"/>
<path d="M16.2 7.2 L20 9.9 L16.2 12.6Z" fill="#157a15"/>
</g>
<g transform="translate(147 277.8)">
<rect x="5.5" y="0.9" width="13.6" height="2.8" fill="#dadada" stroke="#a4a4a4" stroke-width="1.1"/>
<rect x="13.1" y="8.5" width="6" height="2.8" fill="#dadada" stroke="#a4a4a4" stroke-width="1.1"/>
<rect x="5.5" y="16.1" width="13.6" height="3" fill="#adadad" stroke="#a4a4a4" stroke-width="1.1"/>
<path d="M6 3.4 L12.4 9.8 H9.8 V15.4 Q9.8 16.8 8.4 16.8 H3.8 Q2.4 16.8 2.4 15.4 V9.8 H0Z" fill="#fff" stroke="#a2a2a2" stroke-width="1.2" stroke-linejoin="round"/>
</g>
<g transform="translate(175.6 277.8)">
<rect x="5.5" y="0.9" width="13.6" height="2.8" fill="#dadada" stroke="#a4a4a4" stroke-width="1.1"/>
<rect x="13.1" y="8.5" width="6" height="2.8" fill="#dadada" stroke="#a4a4a4" stroke-width="1.1"/>
<rect x="5.5" y="16.1" width="13.6" height="3" fill="#dadada" stroke="#a4a4a4" stroke-width="1.1"/>
<path d="M2.8 4.4 Q2.8 2.8 4.4 2.8 H8 Q9.6 2.8 9.6 4.4 V10 H12.4 L6.2 16.4 L0 10 H2.8Z" fill="#fff" stroke="#a2a2a2" stroke-width="1.2" stroke-linejoin="round"/>
</g>
<g transform="translate(204.6 278)">
<rect x="0" y="0" width="20" height="20" fill="#e9e9e9" opacity=".7"/>
<path d="M11.4 1.6 L18.6 7.8 L11.4 13.6 V10.2 Q6 10 3.6 18.8 L1.6 17.6 Q1.4 6.4 11.4 5.4Z" fill="#12a012" stroke="#0a6a0a" stroke-width="1.1" stroke-linejoin="round"/>
<path d="M3.4 12 Q5 7.6 11 7" stroke="#4fd04f" stroke-width="1.4" fill="none"/>
</g>
<g transform="translate(243 277.8)">
<rect x="0.8" y="0.8" width="14.6" height="17.6" rx="2" fill="#f2f2f2" stroke="#858585" stroke-width="1.4"/>
<path d="M1.4 3 H14.8 M1.4 8.6 H14.8 M1.4 14 H14.8" stroke="#a6a6a6" stroke-width="2.6"/>
<path d="M1.4 5.8 H14.8 M1.4 11.4 H14.8 M1.4 16.6 H14.8" stroke="#fdfdfd" stroke-width="1.6"/>
<path d="M11 9.8 L14 8.6 L17.2 12.2 H20 V19.4 H12.8 V16.6 L9.6 12.8Z" fill="#e2bc24" stroke="#8f7010" stroke-width="1"/>
<path d="M12 11 L16 15.4" stroke="#fff3a0" stroke-width="1.4"/>
</g>
<g transform="translate(271.8 277.8)">
<path d="M5.2 0.8 H15.4 L16.2 8.6 H4.4Z" fill="#f2f2f2" stroke="#666" stroke-width="1.2"/>
<rect x="6" y="3.2" width="8.8" height="4.6" fill="#cfcfcf"/>
<rect x="0.6" y="8.2" width="19.6" height="7.6" rx="2.4" fill="#4b7fcc" stroke="#2d5ca8" stroke-width="1.2"/>
<path d="M3.4 9 H17.4" stroke="#1e2a44" stroke-width="1.5"/>
<rect x="2" y="10.8" width="16.8" height="2.2" rx="1" fill="#b4d0f4"/>
<path d="M4.2 14.2 H16.6 V19.4 H4.2Z" fill="#f8f8f8" stroke="#4a4a4a" stroke-width="1.4"/>
</g>
<g transform="translate(310 277.3)">
<circle cx="10.5" cy="10.5" r="9.7" fill="#a6baee" stroke="#6c8ad6" stroke-width="1.5"/>
<path d="M2.4 7.8 A8.6 8.6 0 0 1 18.6 7.8 Q10.5 10.8 2.4 7.8Z" fill="#c6d4f6" opacity=".85"/>
<text x="10.5" y="15.8" style="font-size:14.5px;font-weight:bold" text-anchor="middle" fill="#3556b8">?</text>
</g>
<text x="368.5" y="297" textLength="77.5" lengthAdjust="spacingAndGlyphs">Qty Available</text>
<rect x="622.3" y="276" width="126.1" height="29.2" fill="#f0f0f0"/>
<rect x="622.3" y="276" width="126.1" height="1.25" fill="#ffffff"/>
<rect x="622.3" y="276" width="1.25" height="29.2" fill="#ffffff"/>
<rect x="622.3" y="303.95" width="126.1" height="1.25" fill="#696969"/>
<rect x="747.15" y="276" width="1.25" height="29.2" fill="#696969"/>
<rect x="623.55" y="277.25" width="123.6" height="1.25" fill="#e3e3e3"/>
<rect x="623.55" y="277.25" width="1.25" height="26.7" fill="#e3e3e3"/>
<rect x="623.55" y="302.7" width="123.6" height="1.25" fill="#a0a0a0"/>
<rect x="745.9" y="277.25" width="1.25" height="26.7" fill="#a0a0a0"/>
<text x="636.6" y="295.2" textLength="97.6" lengthAdjust="spacingAndGlyphs" fill="#fff">Replenishment...</text>
<text x="636" y="294.6" textLength="97.6" lengthAdjust="spacingAndGlyphs" fill="#a0a0a0">Replenishment...</text>
</g>
<g id="grid">
<rect x="8.1" y="314" width="781.5" height="261.5" fill="#6a6a6a"/>
<rect x="9.5" y="315.4" width="778.7" height="258.7" fill="#f0f0f0"/>
<rect x="9.5" y="315.4" width="20.2" height="19.8" fill="#f0f0f0"/>
<rect x="9.5" y="315.4" width="20.2" height="1.1" fill="#fff"/>
<rect x="9.5" y="315.4" width="1.1" height="19.8" fill="#fff"/>
<rect x="9.5" y="334" width="20.2" height="1.2" fill="#a0a0a0"/>
<rect x="28.5" y="315.4" width="1.2" height="19.8" fill="#a0a0a0"/>
<rect x="29.7" y="315.4" width="41.8" height="19.8" fill="#f0f0f0"/>
<rect x="29.7" y="315.4" width="41.8" height="1.1" fill="#fff"/>
<rect x="29.7" y="315.4" width="1.1" height="19.8" fill="#fff"/>
<rect x="29.7" y="334" width="41.8" height="1.2" fill="#a0a0a0"/>
<rect x="70.3" y="315.4" width="1.2" height="19.8" fill="#a0a0a0"/>
<rect x="71.5" y="315.4" width="201.2" height="19.8" fill="#f0f0f0"/>
<rect x="71.5" y="315.4" width="201.2" height="1.1" fill="#fff"/>
<rect x="71.5" y="315.4" width="1.1" height="19.8" fill="#fff"/>
<rect x="71.5" y="334" width="201.2" height="1.2" fill="#a0a0a0"/>
<rect x="271.5" y="315.4" width="1.2" height="19.8" fill="#a0a0a0"/>
<rect x="272.7" y="315.4" width="121" height="19.8" fill="#f0f0f0"/>
<rect x="272.7" y="315.4" width="121" height="1.1" fill="#fff"/>
<rect x="272.7" y="315.4" width="1.1" height="19.8" fill="#fff"/>
<rect x="272.7" y="334" width="121" height="1.2" fill="#a0a0a0"/>
<rect x="392.5" y="315.4" width="1.2" height="19.8" fill="#a0a0a0"/>
<rect x="393.7" y="315.4" width="61.5" height="19.8" fill="#f0f0f0"/>
<rect x="393.7" y="315.4" width="61.5" height="1.1" fill="#fff"/>
<rect x="393.7" y="315.4" width="1.1" height="19.8" fill="#fff"/>
<rect x="393.7" y="334" width="61.5" height="1.2" fill="#a0a0a0"/>
<rect x="454" y="315.4" width="1.2" height="19.8" fill="#a0a0a0"/>
<rect x="455.2" y="315.4" width="121.4" height="19.8" fill="#f0f0f0"/>
<rect x="455.2" y="315.4" width="121.4" height="1.1" fill="#fff"/>
<rect x="455.2" y="315.4" width="1.1" height="19.8" fill="#fff"/>
<rect x="455.2" y="334" width="121.4" height="1.2" fill="#a0a0a0"/>
<rect x="575.4" y="315.4" width="1.2" height="19.8" fill="#a0a0a0"/>
<rect x="576.6" y="315.4" width="151.1" height="19.8" fill="#f0f0f0"/>
<rect x="576.6" y="315.4" width="151.1" height="1.1" fill="#fff"/>
<rect x="576.6" y="315.4" width="1.1" height="19.8" fill="#fff"/>
<rect x="576.6" y="334" width="151.1" height="1.2" fill="#a0a0a0"/>
<rect x="726.5" y="315.4" width="1.2" height="19.8" fill="#a0a0a0"/>
<rect x="727.7" y="315.4" width="40.6" height="19.8" fill="#f0f0f0"/>
<rect x="727.7" y="315.4" width="40.6" height="1.1" fill="#fff"/>
<rect x="727.7" y="315.4" width="1.1" height="19.8" fill="#fff"/>
<rect x="727.7" y="334" width="40.6" height="1.2" fill="#a0a0a0"/>
<rect x="767.1" y="315.4" width="1.2" height="19.8" fill="#a0a0a0"/>
<rect x="9.5" y="335.2" width="20.2" height="22.3" fill="#f0f0f0"/>
<rect x="9.5" y="335.2" width="20.2" height="1.1" fill="#fff"/>
<rect x="9.5" y="335.2" width="1.1" height="22.3" fill="#fff"/>
<rect x="9.5" y="356.3" width="20.2" height="1.2" fill="#a0a0a0"/>
<rect x="28.5" y="335.2" width="1.2" height="22.3" fill="#a0a0a0"/>
<rect x="29.7" y="335.2" width="41.8" height="22.3" fill="#f0f0f0"/>
<rect x="29.7" y="335.2" width="41.8" height="1.1" fill="#fff"/>
<rect x="29.7" y="335.2" width="1.1" height="22.3" fill="#fff"/>
<rect x="29.7" y="356.3" width="41.8" height="1.2" fill="#a0a0a0"/>
<rect x="70.3" y="335.2" width="1.2" height="22.3" fill="#a0a0a0"/>
<rect x="71.5" y="335.2" width="696.8" height="22.3" fill="#fff"/>
<rect x="9.5" y="357.5" width="20.2" height="22.7" fill="#f0f0f0"/>
<rect x="9.5" y="357.5" width="20.2" height="1.1" fill="#fff"/>
<rect x="9.5" y="357.5" width="1.1" height="22.7" fill="#fff"/>
<rect x="9.5" y="379" width="20.2" height="1.2" fill="#a0a0a0"/>
<rect x="28.5" y="357.5" width="1.2" height="22.7" fill="#a0a0a0"/>
<rect x="29.7" y="357.5" width="41.8" height="22.7" fill="#f0f0f0"/>
<rect x="29.7" y="357.5" width="41.8" height="1.1" fill="#fff"/>
<rect x="29.7" y="357.5" width="1.1" height="22.7" fill="#fff"/>
<rect x="29.7" y="379" width="41.8" height="1.2" fill="#a0a0a0"/>
<rect x="70.3" y="357.5" width="1.2" height="22.7" fill="#a0a0a0"/>
<rect x="71.5" y="357.5" width="696.8" height="22.7" fill="#fff"/>
<rect x="272" y="335.2" width="1.35" height="45" fill="#000"/>
<rect x="393" y="335.2" width="1.35" height="45" fill="#000"/>
<rect x="454" y="335.2" width="1.35" height="45" fill="#000"/>
<rect x="576" y="335.2" width="1.35" height="45" fill="#000"/>
<rect x="727" y="335.2" width="1.35" height="45" fill="#000"/>
<rect x="71.5" y="356" width="696.8" height="1.35" fill="#000"/>
<rect x="71.5" y="379" width="696.8" height="1.2" fill="#a0a0a0"/>
<rect x="9.5" y="380" width="62" height="1.2" fill="#a0a0a0"/>
<text x="159.5" y="332" textLength="25.5" lengthAdjust="spacingAndGlyphs">Item</text>
<text x="297" y="332" textLength="71.5" lengthAdjust="spacingAndGlyphs">Qty Ordered</text>
<text x="408.6" y="332" textLength="30.4" lengthAdjust="spacingAndGlyphs">UOM</text>
<text x="487" y="332" textLength="58" lengthAdjust="spacingAndGlyphs">Unit Price</text>
<text x="622.5" y="332" textLength="58.7" lengthAdjust="spacingAndGlyphs">Sales Amt</text>
<clipPath id="cg"><rect x="727" y="315" width="41.2" height="66"/></clipPath>
<g clip-path="url(#cg)">
<text x="745" y="332" textLength="47.7" lengthAdjust="spacingAndGlyphs">Delivery</text>
<text x="731.5" y="351" textLength="58.6" lengthAdjust="spacingAndGlyphs">Drop Ship</text>
</g>
<text x="47.2" y="352" textLength="6" lengthAdjust="spacingAndGlyphs">1</text>
<text x="47" y="373.8" textLength="7.4" lengthAdjust="spacingAndGlyphs">2</text>
<polygon points="15.6,338.2 23.2,345.6 15.6,353" fill="#14741a"/>
<text x="74.6" y="352" textLength="57" lengthAdjust="spacingAndGlyphs">Cable100</text>
<text x="384.4" y="352" textLength="6" lengthAdjust="spacingAndGlyphs">1</text>
<text x="397" y="351" textLength="23" lengthAdjust="spacingAndGlyphs">Box</text>
<rect x="433" y="335.6" width="19.6" height="20" fill="#f0f0f0"/>
<rect x="433" y="335.6" width="19.6" height="1.25" fill="#ffffff"/>
<rect x="433" y="335.6" width="1.25" height="20" fill="#ffffff"/>
<rect x="433" y="354.35" width="19.6" height="1.25" fill="#696969"/>
<rect x="451.35" y="335.6" width="1.25" height="20" fill="#696969"/>
<rect x="434.25" y="336.85" width="17.1" height="1.25" fill="#e3e3e3"/>
<rect x="434.25" y="336.85" width="1.25" height="17.5" fill="#e3e3e3"/>
<rect x="434.25" y="353.1" width="17.1" height="1.25" fill="#a0a0a0"/>
<rect x="450.1" y="336.85" width="1.25" height="17.5" fill="#a0a0a0"/>
<rect x="433" y="354.4" width="19.8" height="1.3" fill="#2a2a2a"/>
<rect x="451.5" y="335.6" width="1.3" height="20.1" fill="#2a2a2a"/>
<polygon points="438.23,343.7 446.98,343.7 442.6,348.7" fill="#000"/>
<text x="525" y="352" textLength="49" lengthAdjust="spacingAndGlyphs">30.0000</text>
<text x="691.4" y="352" textLength="33.8" lengthAdjust="spacingAndGlyphs">30.00</text>
<rect x="768.4" y="315.4" width="20" height="239.2" fill="#f6f6f6"/>
<rect x="768.4" y="315.2" width="20" height="19" fill="#f0f0f0"/>
<rect x="768.4" y="315.2" width="20" height="1.25" fill="#fff"/>
<rect x="768.4" y="315.2" width="1.25" height="19" fill="#fff"/>
<rect x="768.4" y="332.9" width="20" height="1.3" fill="#a0a0a0"/>
<rect x="787.1" y="315.2" width="1.3" height="19" fill="#a0a0a0"/>
<polygon points="774.4,326.9 783.8,326.9 779.1,321.9" fill="#000"/>
<rect x="768.4" y="334.6" width="20" height="198.2" fill="#f0f0f0"/>
<rect x="768.4" y="334.6" width="20" height="1.25" fill="#fff"/>
<rect x="768.4" y="334.6" width="1.25" height="198.2" fill="#fff"/>
<rect x="768.4" y="531.5" width="20" height="1.3" fill="#808080"/>
<rect x="787.1" y="334.6" width="1.3" height="198.2" fill="#808080"/>
<rect x="768.4" y="535.4" width="20" height="19.4" fill="#f0f0f0"/>
<rect x="768.4" y="535.4" width="20" height="1.25" fill="#fff"/>
<rect x="768.4" y="535.4" width="1.25" height="19.4" fill="#fff"/>
<rect x="768.4" y="553.5" width="20" height="1.3" fill="#808080"/>
<rect x="787.1" y="535.4" width="1.3" height="19.4" fill="#808080"/>
<polygon points="774.4,542.8 783.8,542.8 779.1,547.8" fill="#000"/>
<rect x="768.4" y="554" width="20" height="20.4" fill="#808080"/>
<rect x="769.9" y="555.5" width="18.5" height="18.9" fill="#c3c3c3"/>
<rect x="9.5" y="554.6" width="758.9" height="19.8" fill="#f8f8f8"/>
<rect x="9.5" y="555.4" width="19.7" height="19" fill="#f0f0f0"/>
<rect x="9.5" y="555.4" width="19.7" height="1.25" fill="#fff"/>
<rect x="9.5" y="555.4" width="1.25" height="19" fill="#fff"/>
<rect x="9.5" y="573.1" width="19.7" height="1.3" fill="#808080"/>
<rect x="27.9" y="555.4" width="1.3" height="19" fill="#808080"/>
<polygon points="19.5,560.1 19.5,569.5 14.5,564.8" fill="#000"/>
<rect x="29.2" y="555.4" width="388.4" height="19" fill="#f0f0f0"/>
<rect x="29.2" y="555.4" width="388.4" height="1.25" fill="#fff"/>
<rect x="29.2" y="555.4" width="1.25" height="19" fill="#fff"/>
<rect x="29.2" y="573.1" width="388.4" height="1.3" fill="#a0a0a0"/>
<rect x="416.3" y="555.4" width="1.3" height="19" fill="#a0a0a0"/>
<rect x="749.4" y="555.4" width="19" height="19" fill="#f0f0f0"/>
<rect x="749.4" y="555.4" width="19" height="1.25" fill="#fff"/>
<rect x="749.4" y="555.4" width="1.25" height="19" fill="#fff"/>
<rect x="749.4" y="573.1" width="19" height="1.3" fill="#a0a0a0"/>
<rect x="767.1" y="555.4" width="1.3" height="19" fill="#a0a0a0"/>
<polygon points="756.9,560.1 756.9,569.5 761.9,564.8" fill="#000"/>
</g>
<g id="tabs">
<rect x="798.6" y="98.6" width="353" height="1.25" fill="#fff"/>
<rect x="798.6" y="98.6" width="1.25" height="477.2" fill="#fff"/>
<rect x="1149.7" y="98.6" width="1.5" height="31.2" fill="#8a8a8a"/>
<rect x="1149.4" y="129.8" width="1.8" height="446" fill="#6e6e6e"/>
<rect x="798.6" y="574.3" width="352.6" height="1.5" fill="#8a8a8a"/>
<rect x="801.3" y="77.8" width="61.7" height="20.8" fill="#f0f0f0"/>
<path d="M801.9 98.6 V80.8 Q801.9 78.4 804.3 78.4 H860" fill="none" stroke="#fff" stroke-width="1.25"/>
<path d="M860 78.4 Q862.3 78.4 862.3 80.8 V98.6" fill="none" stroke="#696969" stroke-width="1.5"/>
<rect x="860.1" y="80.2" width="1.5" height="18.4" fill="#a0a0a0"/>
<rect x="906" y="77.8" width="93.2" height="20.8" fill="#f0f0f0"/>
<path d="M906.6 98.6 V80.8 Q906.6 78.4 909 78.4 H996.2" fill="none" stroke="#fff" stroke-width="1.25"/>
<path d="M996.2 78.4 Q998.5 78.4 998.5 80.8 V98.6" fill="none" stroke="#696969" stroke-width="1.5"/>
<rect x="996.3" y="80.2" width="1.5" height="18.4" fill="#a0a0a0"/>
<rect x="860.8" y="75.2" width="46.2" height="24.7" fill="#f0f0f0"/>
<path d="M861.4 99.9 V78.2 Q861.4 75.8 863.8 75.8 H904" fill="none" stroke="#fff" stroke-width="1.25"/>
<path d="M904 75.8 Q906.3 75.8 906.3 78.2 V99.9" fill="none" stroke="#696969" stroke-width="1.5"/>
<rect x="904.1" y="77.6" width="1.5" height="22.3" fill="#a0a0a0"/>
<text x="812" y="95.2" textLength="44" lengthAdjust="spacingAndGlyphs">Header</text>
<rect x="811.1" y="96.15" width="11.49" height="1.25" fill="#000"/>
<text x="870.5" y="93.8" textLength="25.5" lengthAdjust="spacingAndGlyphs">Line</text>
<rect x="869.6" y="95.15" width="9.3" height="1.25" fill="#000"/>
<text x="913.5" y="95.2" textLength="77.5" lengthAdjust="spacingAndGlyphs">Line Defaults</text>
<rect x="969.42" y="96.15" width="9.2" height="1.25" fill="#000"/>
<rect x="799.85" y="129.8" width="349.55" height="1.25" fill="#fff"/>
<rect x="874" y="108.8" width="63" height="21" fill="#f0f0f0"/>
<path d="M874.6 129.8 V111.8 Q874.6 109.4 877 109.4 H934" fill="none" stroke="#fff" stroke-width="1.25"/>
<path d="M934 109.4 Q936.3 109.4 936.3 111.8 V129.8" fill="none" stroke="#696969" stroke-width="1.5"/>
<rect x="934.1" y="111.2" width="1.5" height="18.6" fill="#a0a0a0"/>
<rect x="937" y="108.8" width="42.6" height="21" fill="#f0f0f0"/>
<path d="M937.6 129.8 V111.8 Q937.6 109.4 940 109.4 H976.6" fill="none" stroke="#fff" stroke-width="1.25"/>
<path d="M976.6 109.4 Q978.9 109.4 978.9 111.8 V129.8" fill="none" stroke="#696969" stroke-width="1.5"/>
<rect x="976.7" y="111.2" width="1.5" height="18.6" fill="#a0a0a0"/>
<rect x="979.6" y="108.8" width="50.2" height="21" fill="#f0f0f0"/>
<path d="M980.2 129.8 V111.8 Q980.2 109.4 982.6 109.4 H1026.8" fill="none" stroke="#fff" stroke-width="1.25"/>
<path d="M1026.8 109.4 Q1029.1 109.4 1029.1 111.8 V129.8" fill="none" stroke="#696969" stroke-width="1.5"/>
<rect x="1026.9" y="111.2" width="1.5" height="18.6" fill="#a0a0a0"/>
<rect x="799.8" y="106.2" width="74.8" height="24.9" fill="#f0f0f0"/>
<path d="M800.4 131.1 V109.2 Q800.4 106.8 802.8 106.8 H871.6" fill="none" stroke="#fff" stroke-width="1.25"/>
<path d="M871.6 106.8 Q873.9 106.8 873.9 109.2 V131.1" fill="none" stroke="#696969" stroke-width="1.5"/>
<rect x="871.7" y="108.6" width="1.5" height="22.5" fill="#a0a0a0"/>
<text x="812" y="125.6" textLength="54" lengthAdjust="spacingAndGlyphs">Favorites</text>
<rect x="811.1" y="127.15" width="9.83" height="1.25" fill="#000"/>
<text x="881" y="127" textLength="47.7" lengthAdjust="spacingAndGlyphs">Delivery</text>
<rect x="880.1" y="128.15" width="11.34" height="1.25" fill="#000"/>
<text x="946" y="127" textLength="25.5" lengthAdjust="spacingAndGlyphs">Item</text>
<rect x="945.1" y="128.15" width="5.45" height="1.25" fill="#000"/>
<text x="988.5" y="127" textLength="32.5" lengthAdjust="spacingAndGlyphs">Other</text>
<rect x="987.6" y="128.15" width="11.91" height="1.25" fill="#000"/>
<text x="810.5" y="162" textLength="65.5" lengthAdjust="spacingAndGlyphs">Description</text>
<text x="810" y="188.5" textLength="35" lengthAdjust="spacingAndGlyphs">Whse</text>
<text x="810.5" y="216.5" textLength="65.5" lengthAdjust="spacingAndGlyphs">Line Status</text>
<text x="810.5" y="246" textLength="47.5" lengthAdjust="spacingAndGlyphs">Ship Via</text>
<text x="810.5" y="273.5" textLength="24.5" lengthAdjust="spacingAndGlyphs">FOB</text>
<text x="810.5" y="302" textLength="39" lengthAdjust="spacingAndGlyphs">Priority</text>
<text x="810.5" y="331.5" textLength="40" lengthAdjust="spacingAndGlyphs">Freight</text>
<text x="810.5" y="359.3" textLength="90.5" lengthAdjust="spacingAndGlyphs">Trade Discount</text>
<text x="810.5" y="386.8" textLength="78.5" lengthAdjust="spacingAndGlyphs">Trade Disc %</text>
<text x="810.5" y="414" textLength="56.5" lengthAdjust="spacingAndGlyphs">Tax Class</text>
<text x="810.5" y="445" textLength="70.5" lengthAdjust="spacingAndGlyphs">Tax Amount</text>
<text x="810.5" y="472" textLength="64.5" lengthAdjust="spacingAndGlyphs">Requested</text>
<text x="810.5" y="501.7" textLength="68" lengthAdjust="spacingAndGlyphs">Sched Ship</text>
<text x="810.5" y="532" textLength="53.5" lengthAdjust="spacingAndGlyphs">Promised</text>
<rect x="908.4" y="145.8" width="228.7" height="22.9" fill="#fff"/>
<rect x="908.4" y="145.8" width="228.7" height="1.25" fill="#a0a0a0"/>
<rect x="908.4" y="145.8" width="1.25" height="22.9" fill="#a0a0a0"/>
<rect x="908.4" y="167.45" width="228.7" height="1.25" fill="#ffffff"/>
<rect x="1135.85" y="145.8" width="1.25" height="22.9" fill="#ffffff"/>
<rect x="909.65" y="147.05" width="226.2" height="1.25" fill="#696969"/>
<rect x="909.65" y="147.05" width="1.25" height="20.4" fill="#696969"/>
<rect x="909.65" y="166.2" width="226.2" height="1.25" fill="#e3e3e3"/>
<rect x="1134.6" y="147.05" width="1.25" height="20.4" fill="#e3e3e3"/>
<text x="914" y="162.5" textLength="119.5" lengthAdjust="spacingAndGlyphs">100' Standard Cable</text>
<rect x="908.4" y="173.3" width="74.1" height="22.9" fill="#fff"/>
<rect x="908.4" y="173.3" width="74.1" height="1.25" fill="#a0a0a0"/>
<rect x="908.4" y="173.3" width="1.25" height="22.9" fill="#a0a0a0"/>
<rect x="908.4" y="194.95" width="74.1" height="1.25" fill="#ffffff"/>
<rect x="981.25" y="173.3" width="1.25" height="22.9" fill="#ffffff"/>
<rect x="909.65" y="174.55" width="71.6" height="1.25" fill="#696969"/>
<rect x="909.65" y="174.55" width="1.25" height="20.4" fill="#696969"/>
<rect x="909.65" y="193.7" width="71.6" height="1.25" fill="#e3e3e3"/>
<rect x="980" y="174.55" width="1.25" height="20.4" fill="#e3e3e3"/>
<text x="914" y="190" textLength="33" lengthAdjust="spacingAndGlyphs">Rialto</text>
<rect x="986" y="173" width="24" height="23.2" fill="#f0f0f0"/>
<rect x="986" y="173" width="24" height="1.25" fill="#ffffff"/>
<rect x="986" y="173" width="1.25" height="23.2" fill="#ffffff"/>
<rect x="986" y="194.95" width="24" height="1.25" fill="#696969"/>
<rect x="1008.75" y="173" width="1.25" height="23.2" fill="#696969"/>
<rect x="987.25" y="174.25" width="21.5" height="1.25" fill="#e3e3e3"/>
<rect x="987.25" y="174.25" width="1.25" height="20.7" fill="#e3e3e3"/>
<rect x="987.25" y="193.7" width="21.5" height="1.25" fill="#a0a0a0"/>
<rect x="1007.5" y="174.25" width="1.25" height="20.7" fill="#a0a0a0"/>
<g transform="translate(986 173)">
<path d="M12 12.4 L17.6 17" stroke="#5e2d25" stroke-width="5.4" stroke-linecap="round"/>
<path d="M12.6 12.4 L17.4 16.4" stroke="#a0503f" stroke-width="2.8" stroke-linecap="round"/>
<circle cx="7.7" cy="7.9" r="4.7" fill="#7ab6f2" stroke="#2458b0" stroke-width="1.6"/>
<path d="M4.8 7.4 A3 3 0 0 1 8 4.8" stroke="#fff" stroke-width="1.3" fill="none" opacity=".75"/>
</g>
<rect x="908.4" y="201.3" width="121.05" height="24.95" fill="#fff"/>
<rect x="908.4" y="201.3" width="121.05" height="1.25" fill="#a0a0a0"/>
<rect x="908.4" y="201.3" width="1.25" height="24.95" fill="#a0a0a0"/>
<rect x="908.4" y="225" width="121.05" height="1.25" fill="#ffffff"/>
<rect x="1028.2" y="201.3" width="1.25" height="24.95" fill="#ffffff"/>
<rect x="909.65" y="202.55" width="118.55" height="1.25" fill="#696969"/>
<rect x="909.65" y="202.55" width="1.25" height="22.45" fill="#696969"/>
<rect x="909.65" y="223.75" width="118.55" height="1.25" fill="#e3e3e3"/>
<rect x="1026.95" y="202.55" width="1.25" height="22.45" fill="#e3e3e3"/>
<rect x="1007.3" y="203.8" width="20.6" height="21" fill="#f0f0f0"/>
<rect x="1007.3" y="203.8" width="20.6" height="1.25" fill="#ffffff"/>
<rect x="1007.3" y="203.8" width="1.25" height="21" fill="#ffffff"/>
<rect x="1007.3" y="223.55" width="20.6" height="1.25" fill="#696969"/>
<rect x="1026.65" y="203.8" width="1.25" height="21" fill="#696969"/>
<rect x="1008.55" y="205.05" width="18.1" height="1.25" fill="#e3e3e3"/>
<rect x="1008.55" y="205.05" width="1.25" height="18.5" fill="#e3e3e3"/>
<rect x="1008.55" y="222.3" width="18.1" height="1.25" fill="#a0a0a0"/>
<rect x="1025.4" y="205.05" width="1.25" height="18.5" fill="#a0a0a0"/>
<polygon points="1013.03,212.4 1021.78,212.4 1017.4,217.4" fill="#000"/>
<text x="914" y="219" textLength="32.6" lengthAdjust="spacingAndGlyphs">Open</text>
<rect x="908.4" y="230.8" width="139.1" height="23.1" fill="#fff"/>
<rect x="908.4" y="230.8" width="139.1" height="1.25" fill="#a0a0a0"/>
<rect x="908.4" y="230.8" width="1.25" height="23.1" fill="#a0a0a0"/>
<rect x="908.4" y="252.65" width="139.1" height="1.25" fill="#ffffff"/>
<rect x="1046.25" y="230.8" width="1.25" height="23.1" fill="#ffffff"/>
<rect x="909.65" y="232.05" width="136.6" height="1.25" fill="#696969"/>
<rect x="909.65" y="232.05" width="1.25" height="20.6" fill="#696969"/>
<rect x="909.65" y="251.4" width="136.6" height="1.25" fill="#e3e3e3"/>
<rect x="1045" y="232.05" width="1.25" height="20.6" fill="#e3e3e3"/>
<text x="914" y="247.5" textLength="26" lengthAdjust="spacingAndGlyphs">UPS</text>
<rect x="1051" y="230.6" width="24" height="23" fill="#f0f0f0"/>
<rect x="1051" y="230.6" width="24" height="1.25" fill="#ffffff"/>
<rect x="1051" y="230.6" width="1.25" height="23" fill="#ffffff"/>
<rect x="1051" y="252.35" width="24" height="1.25" fill="#696969"/>
<rect x="1073.75" y="230.6" width="1.25" height="23" fill="#696969"/>
<rect x="1052.25" y="231.85" width="21.5" height="1.25" fill="#e3e3e3"/>
<rect x="1052.25" y="231.85" width="1.25" height="20.5" fill="#e3e3e3"/>
<rect x="1052.25" y="251.1" width="21.5" height="1.25" fill="#a0a0a0"/>
<rect x="1072.5" y="231.85" width="1.25" height="20.5" fill="#a0a0a0"/>
<g transform="translate(1051 230.6)">
<path d="M12 12.4 L17.6 17" stroke="#5e2d25" stroke-width="5.4" stroke-linecap="round"/>
<path d="M12.6 12.4 L17.4 16.4" stroke="#a0503f" stroke-width="2.8" stroke-linecap="round"/>
<circle cx="7.7" cy="7.9" r="4.7" fill="#7ab6f2" stroke="#2458b0" stroke-width="1.6"/>
<path d="M4.8 7.4 A3 3 0 0 1 8 4.8" stroke="#fff" stroke-width="1.3" fill="none" opacity=".75"/>
</g>
<rect x="908.4" y="258.3" width="139.1" height="22.9" fill="#fff"/>
<rect x="908.4" y="258.3" width="139.1" height="1.25" fill="#a0a0a0"/>
<rect x="908.4" y="258.3" width="1.25" height="22.9" fill="#a0a0a0"/>
<rect x="908.4" y="279.95" width="139.1" height="1.25" fill="#ffffff"/>
<rect x="1046.25" y="258.3" width="1.25" height="22.9" fill="#ffffff"/>
<rect x="909.65" y="259.55" width="136.6" height="1.25" fill="#696969"/>
<rect x="909.65" y="259.55" width="1.25" height="20.4" fill="#696969"/>
<rect x="909.65" y="278.7" width="136.6" height="1.25" fill="#e3e3e3"/>
<rect x="1045" y="259.55" width="1.25" height="20.4" fill="#e3e3e3"/>
<rect x="1051" y="258" width="24" height="23" fill="#f0f0f0"/>
<rect x="1051" y="258" width="24" height="1.25" fill="#ffffff"/>
<rect x="1051" y="258" width="1.25" height="23" fill="#ffffff"/>
<rect x="1051" y="279.75" width="24" height="1.25" fill="#696969"/>
<rect x="1073.75" y="258" width="1.25" height="23" fill="#696969"/>
<rect x="1052.25" y="259.25" width="21.5" height="1.25" fill="#e3e3e3"/>
<rect x="1052.25" y="259.25" width="1.25" height="20.5" fill="#e3e3e3"/>
<rect x="1052.25" y="278.5" width="21.5" height="1.25" fill="#a0a0a0"/>
<rect x="1072.5" y="259.25" width="1.25" height="20.5" fill="#a0a0a0"/>
<g transform="translate(1051 258)">
<path d="M12 12.4 L17.6 17" stroke="#5e2d25" stroke-width="5.4" stroke-linecap="round"/>
<path d="M12.6 12.4 L17.4 16.4" stroke="#a0503f" stroke-width="2.8" stroke-linecap="round"/>
<circle cx="7.7" cy="7.9" r="4.7" fill="#7ab6f2" stroke="#2458b0" stroke-width="1.6"/>
<path d="M4.8 7.4 A3 3 0 0 1 8 4.8" stroke="#fff" stroke-width="1.3" fill="none" opacity=".75"/>
</g>
<rect x="908.4" y="286" width="166.05" height="24.85" fill="#fff"/>
<rect x="908.4" y="286" width="166.05" height="1.25" fill="#a0a0a0"/>
<rect x="908.4" y="286" width="1.25" height="24.85" fill="#a0a0a0"/>
<rect x="908.4" y="309.6" width="166.05" height="1.25" fill="#ffffff"/>
<rect x="1073.2" y="286" width="1.25" height="24.85" fill="#ffffff"/>
<rect x="909.65" y="287.25" width="163.55" height="1.25" fill="#696969"/>
<rect x="909.65" y="287.25" width="1.25" height="22.35" fill="#696969"/>
<rect x="909.65" y="308.35" width="163.55" height="1.25" fill="#e3e3e3"/>
<rect x="1071.95" y="287.25" width="1.25" height="22.35" fill="#e3e3e3"/>
<rect x="1052.3" y="288.5" width="20.6" height="20.9" fill="#f0f0f0"/>
<rect x="1052.3" y="288.5" width="20.6" height="1.25" fill="#ffffff"/>
<rect x="1052.3" y="288.5" width="1.25" height="20.9" fill="#ffffff"/>
<rect x="1052.3" y="308.15" width="20.6" height="1.25" fill="#696969"/>
<rect x="1071.65" y="288.5" width="1.25" height="20.9" fill="#696969"/>
<rect x="1053.55" y="289.75" width="18.1" height="1.25" fill="#e3e3e3"/>
<rect x="1053.55" y="289.75" width="1.25" height="18.4" fill="#e3e3e3"/>
<rect x="1053.55" y="306.9" width="18.1" height="1.25" fill="#a0a0a0"/>
<rect x="1070.4" y="289.75" width="1.25" height="18.4" fill="#a0a0a0"/>
<polygon points="1058.03,297.05 1066.78,297.05 1062.4,302.05" fill="#000"/>
<text x="914.6" y="304" textLength="6" lengthAdjust="spacingAndGlyphs">1</text>
<rect x="908.4" y="315.8" width="138.7" height="22.9" fill="#fff"/>
<rect x="908.4" y="315.8" width="138.7" height="1.25" fill="#a0a0a0"/>
<rect x="908.4" y="315.8" width="1.25" height="22.9" fill="#a0a0a0"/>
<rect x="908.4" y="337.45" width="138.7" height="1.25" fill="#ffffff"/>
<rect x="1045.85" y="315.8" width="1.25" height="22.9" fill="#ffffff"/>
<rect x="909.65" y="317.05" width="136.2" height="1.25" fill="#696969"/>
<rect x="909.65" y="317.05" width="1.25" height="20.4" fill="#696969"/>
<rect x="909.65" y="336.2" width="136.2" height="1.25" fill="#e3e3e3"/>
<rect x="1044.6" y="317.05" width="1.25" height="20.4" fill="#e3e3e3"/>
<text x="1016.5" y="332.4" textLength="26" lengthAdjust="spacingAndGlyphs">0.00</text>
<rect x="908.4" y="343.3" width="171.1" height="22.9" fill="#fff"/>
<rect x="908.4" y="343.3" width="171.1" height="1.25" fill="#a0a0a0"/>
<rect x="908.4" y="343.3" width="1.25" height="22.9" fill="#a0a0a0"/>
<rect x="908.4" y="364.95" width="171.1" height="1.25" fill="#ffffff"/>
<rect x="1078.25" y="343.3" width="1.25" height="22.9" fill="#ffffff"/>
<rect x="909.65" y="344.55" width="168.6" height="1.25" fill="#696969"/>
<rect x="909.65" y="344.55" width="1.25" height="20.4" fill="#696969"/>
<rect x="909.65" y="363.7" width="168.6" height="1.25" fill="#e3e3e3"/>
<rect x="1077" y="344.55" width="1.25" height="20.4" fill="#e3e3e3"/>
<text x="1049" y="360" textLength="26" lengthAdjust="spacingAndGlyphs">0.00</text>
<rect x="908.4" y="370.8" width="59.7" height="22.9" fill="#fff"/>
<rect x="908.4" y="370.8" width="59.7" height="1.25" fill="#a0a0a0"/>
<rect x="908.4" y="370.8" width="1.25" height="22.9" fill="#a0a0a0"/>
<rect x="908.4" y="392.45" width="59.7" height="1.25" fill="#ffffff"/>
<rect x="966.85" y="370.8" width="1.25" height="22.9" fill="#ffffff"/>
<rect x="909.65" y="372.05" width="57.2" height="1.25" fill="#696969"/>
<rect x="909.65" y="372.05" width="1.25" height="20.4" fill="#696969"/>
<rect x="909.65" y="391.2" width="57.2" height="1.25" fill="#e3e3e3"/>
<rect x="965.6" y="372.05" width="1.25" height="20.4" fill="#e3e3e3"/>
<text x="937.6" y="387.4" textLength="26" lengthAdjust="spacingAndGlyphs">0.00</text>
<rect x="908.4" y="398.3" width="201.05" height="24.95" fill="#fff"/>
<rect x="908.4" y="398.3" width="201.05" height="1.25" fill="#a0a0a0"/>
<rect x="908.4" y="398.3" width="1.25" height="24.95" fill="#a0a0a0"/>
<rect x="908.4" y="422" width="201.05" height="1.25" fill="#ffffff"/>
<rect x="1108.2" y="398.3" width="1.25" height="24.95" fill="#ffffff"/>
<rect x="909.65" y="399.55" width="198.55" height="1.25" fill="#696969"/>
<rect x="909.65" y="399.55" width="1.25" height="22.45" fill="#696969"/>
<rect x="909.65" y="420.75" width="198.55" height="1.25" fill="#e3e3e3"/>
<rect x="1106.95" y="399.55" width="1.25" height="22.45" fill="#e3e3e3"/>
<rect x="1087.3" y="400.8" width="20.6" height="21" fill="#f0f0f0"/>
<rect x="1087.3" y="400.8" width="20.6" height="1.25" fill="#ffffff"/>
<rect x="1087.3" y="400.8" width="1.25" height="21" fill="#ffffff"/>
<rect x="1087.3" y="420.55" width="20.6" height="1.25" fill="#696969"/>
<rect x="1106.65" y="400.8" width="1.25" height="21" fill="#696969"/>
<rect x="1088.55" y="402.05" width="18.1" height="1.25" fill="#e3e3e3"/>
<rect x="1088.55" y="402.05" width="1.25" height="18.5" fill="#e3e3e3"/>
<rect x="1088.55" y="419.3" width="18.1" height="1.25" fill="#a0a0a0"/>
<rect x="1105.4" y="402.05" width="1.25" height="18.5" fill="#a0a0a0"/>
<polygon points="1093.03,409.4 1101.78,409.4 1097.4,414.4" fill="#000"/>
<text x="914" y="416" textLength="78.5" lengthAdjust="spacingAndGlyphs">SOA-Taxable</text>
<rect x="908.4" y="428.3" width="171.1" height="22.9" fill="#f0f0f0"/>
<rect x="908.4" y="428.3" width="171.1" height="1.25" fill="#a0a0a0"/>
<rect x="908.4" y="428.3" width="1.25" height="22.9" fill="#a0a0a0"/>
<rect x="908.4" y="449.95" width="171.1" height="1.25" fill="#ffffff"/>
<rect x="1078.25" y="428.3" width="1.25" height="22.9" fill="#ffffff"/>
<rect x="909.65" y="429.55" width="168.6" height="1.25" fill="#696969"/>
<rect x="909.65" y="429.55" width="1.25" height="20.4" fill="#696969"/>
<rect x="909.65" y="448.7" width="168.6" height="1.25" fill="#e3e3e3"/>
<rect x="1077" y="429.55" width="1.25" height="20.4" fill="#e3e3e3"/>
<text x="1049.4" y="445.4" textLength="25.6" lengthAdjust="spacingAndGlyphs">1.95</text>
<rect x="1081" y="428.3" width="26.4" height="23.3" fill="#f0f0f0"/>
<rect x="1081" y="428.3" width="26.4" height="1.25" fill="#ffffff"/>
<rect x="1081" y="428.3" width="1.25" height="23.3" fill="#ffffff"/>
<rect x="1081" y="450.35" width="26.4" height="1.25" fill="#696969"/>
<rect x="1106.15" y="428.3" width="1.25" height="23.3" fill="#696969"/>
<rect x="1082.25" y="429.55" width="23.9" height="1.25" fill="#e3e3e3"/>
<rect x="1082.25" y="429.55" width="1.25" height="20.8" fill="#e3e3e3"/>
<rect x="1082.25" y="449.1" width="23.9" height="1.25" fill="#a0a0a0"/>
<rect x="1104.9" y="429.55" width="1.25" height="20.8" fill="#a0a0a0"/>
<text x="1094.4" y="445.35" textLength="10" lengthAdjust="spacingAndGlyphs" text-anchor="middle" style="font-size:14px">...</text>
<rect x="908.4" y="456" width="166.05" height="25.25" fill="#fff"/>
<rect x="908.4" y="456" width="166.05" height="1.25" fill="#a0a0a0"/>
<rect x="908.4" y="456" width="1.25" height="25.25" fill="#a0a0a0"/>
<rect x="908.4" y="480" width="166.05" height="1.25" fill="#ffffff"/>
<rect x="1073.2" y="456" width="1.25" height="25.25" fill="#ffffff"/>
<rect x="909.65" y="457.25" width="163.55" height="1.25" fill="#696969"/>
<rect x="909.65" y="457.25" width="1.25" height="22.75" fill="#696969"/>
<rect x="909.65" y="478.75" width="163.55" height="1.25" fill="#e3e3e3"/>
<rect x="1071.95" y="457.25" width="1.25" height="22.75" fill="#e3e3e3"/>
<rect x="1052.3" y="458.5" width="20.6" height="21.3" fill="#f0f0f0"/>
<rect x="1052.3" y="458.5" width="20.6" height="1.25" fill="#ffffff"/>
<rect x="1052.3" y="458.5" width="1.25" height="21.3" fill="#ffffff"/>
<rect x="1052.3" y="478.55" width="20.6" height="1.25" fill="#696969"/>
<rect x="1071.65" y="458.5" width="1.25" height="21.3" fill="#696969"/>
<rect x="1053.55" y="459.75" width="18.1" height="1.25" fill="#e3e3e3"/>
<rect x="1053.55" y="459.75" width="1.25" height="18.8" fill="#e3e3e3"/>
<rect x="1053.55" y="477.3" width="18.1" height="1.25" fill="#a0a0a0"/>
<rect x="1070.4" y="459.75" width="1.25" height="18.8" fill="#a0a0a0"/>
<polygon points="1058.03,467.25 1066.78,467.25 1062.4,472.25" fill="#000"/>
<text x="911" y="472" textLength="72.5" lengthAdjust="spacingAndGlyphs">03/01/2020</text>
<rect x="908.4" y="486" width="166.05" height="25.25" fill="#fff"/>
<rect x="908.4" y="486" width="166.05" height="1.25" fill="#a0a0a0"/>
<rect x="908.4" y="486" width="1.25" height="25.25" fill="#a0a0a0"/>
<rect x="908.4" y="510" width="166.05" height="1.25" fill="#ffffff"/>
<rect x="1073.2" y="486" width="1.25" height="25.25" fill="#ffffff"/>
<rect x="909.65" y="487.25" width="163.55" height="1.25" fill="#696969"/>
<rect x="909.65" y="487.25" width="1.25" height="22.75" fill="#696969"/>
<rect x="909.65" y="508.75" width="163.55" height="1.25" fill="#e3e3e3"/>
<rect x="1071.95" y="487.25" width="1.25" height="22.75" fill="#e3e3e3"/>
<rect x="1052.3" y="488.5" width="20.6" height="21.3" fill="#f0f0f0"/>
<rect x="1052.3" y="488.5" width="20.6" height="1.25" fill="#ffffff"/>
<rect x="1052.3" y="488.5" width="1.25" height="21.3" fill="#ffffff"/>
<rect x="1052.3" y="508.55" width="20.6" height="1.25" fill="#696969"/>
<rect x="1071.65" y="488.5" width="1.25" height="21.3" fill="#696969"/>
<rect x="1053.55" y="489.75" width="18.1" height="1.25" fill="#e3e3e3"/>
<rect x="1053.55" y="489.75" width="1.25" height="18.8" fill="#e3e3e3"/>
<rect x="1053.55" y="507.3" width="18.1" height="1.25" fill="#a0a0a0"/>
<rect x="1070.4" y="489.75" width="1.25" height="18.8" fill="#a0a0a0"/>
<polygon points="1058.03,497.25 1066.78,497.25 1062.4,502.25" fill="#000"/>
<text x="911" y="501.8" textLength="72.5" lengthAdjust="spacingAndGlyphs">02/27/2020</text>
<rect x="908.4" y="516" width="166.05" height="25.25" fill="#fff"/>
<rect x="908.4" y="516" width="166.05" height="1.25" fill="#a0a0a0"/>
<rect x="908.4" y="516" width="1.25" height="25.25" fill="#a0a0a0"/>
<rect x="908.4" y="540" width="166.05" height="1.25" fill="#ffffff"/>
<rect x="1073.2" y="516" width="1.25" height="25.25" fill="#ffffff"/>
<rect x="909.65" y="517.25" width="163.55" height="1.25" fill="#696969"/>
<rect x="909.65" y="517.25" width="1.25" height="22.75" fill="#696969"/>
<rect x="909.65" y="538.75" width="163.55" height="1.25" fill="#e3e3e3"/>
<rect x="1071.95" y="517.25" width="1.25" height="22.75" fill="#e3e3e3"/>
<rect x="1052.3" y="518.5" width="20.6" height="21.3" fill="#f0f0f0"/>
<rect x="1052.3" y="518.5" width="20.6" height="1.25" fill="#ffffff"/>
<rect x="1052.3" y="518.5" width="1.25" height="21.3" fill="#ffffff"/>
<rect x="1052.3" y="538.55" width="20.6" height="1.25" fill="#696969"/>
<rect x="1071.65" y="518.5" width="1.25" height="21.3" fill="#696969"/>
<rect x="1053.55" y="519.75" width="18.1" height="1.25" fill="#e3e3e3"/>
<rect x="1053.55" y="519.75" width="1.25" height="18.8" fill="#e3e3e3"/>
<rect x="1053.55" y="537.3" width="18.1" height="1.25" fill="#a0a0a0"/>
<rect x="1070.4" y="519.75" width="1.25" height="18.8" fill="#a0a0a0"/>
<polygon points="1058.03,527.25 1066.78,527.25 1062.4,532.25" fill="#000"/>
<text x="911" y="531.8" textLength="72.5" lengthAdjust="spacingAndGlyphs">03/01/2020</text>
</g>
<g id="statusbar">
<rect x="5.8" y="586.8" width="27.8" height="27.4" fill="#f0f0f0"/>
<rect x="5.8" y="586.8" width="27.8" height="1.25" fill="#ffffff"/>
<rect x="5.8" y="586.8" width="1.25" height="27.4" fill="#ffffff"/>
<rect x="5.8" y="612.95" width="27.8" height="1.25" fill="#696969"/>
<rect x="32.35" y="586.8" width="1.25" height="27.4" fill="#696969"/>
<rect x="7.05" y="588.05" width="25.3" height="1.25" fill="#e3e3e3"/>
<rect x="7.05" y="588.05" width="1.25" height="24.9" fill="#e3e3e3"/>
<rect x="7.05" y="611.7" width="25.3" height="1.25" fill="#a0a0a0"/>
<rect x="31.1" y="588.05" width="1.25" height="24.9" fill="#a0a0a0"/>
<g transform="translate(5.8 587)">
<rect x="7.6" y="6.6" width="2.8" height="13.8" rx="1.2" fill="#4470d0" stroke="#2d51ad" stroke-width="1" stroke-linejoin="round"/>
<path d="M20.2 6.6 V20.6 L12.4 13.6Z" fill="#4470d0" stroke="#2d51ad" stroke-width="1" stroke-linejoin="round"/>
</g>
<rect x="34.7" y="586.8" width="27.8" height="27.4" fill="#f0f0f0"/>
<rect x="34.7" y="586.8" width="27.8" height="1.25" fill="#ffffff"/>
<rect x="34.7" y="586.8" width="1.25" height="27.4" fill="#ffffff"/>
<rect x="34.7" y="612.95" width="27.8" height="1.25" fill="#696969"/>
<rect x="61.25" y="586.8" width="1.25" height="27.4" fill="#696969"/>
<rect x="35.95" y="588.05" width="25.3" height="1.25" fill="#e3e3e3"/>
<rect x="35.95" y="588.05" width="1.25" height="24.9" fill="#e3e3e3"/>
<rect x="35.95" y="611.7" width="25.3" height="1.25" fill="#a0a0a0"/>
<rect x="60" y="588.05" width="1.25" height="24.9" fill="#a0a0a0"/>
<g transform="translate(34.7 587)">
<path d="M18 6.4 V20.6 L9.8 13.5Z" fill="#4470d0" stroke="#2d51ad" stroke-width="1" stroke-linejoin="round"/>
</g>
<rect x="63.6" y="586.8" width="27.8" height="27.4" fill="#f0f0f0"/>
<rect x="63.6" y="586.8" width="27.8" height="1.25" fill="#ffffff"/>
<rect x="63.6" y="586.8" width="1.25" height="27.4" fill="#ffffff"/>
<rect x="63.6" y="612.95" width="27.8" height="1.25" fill="#696969"/>
<rect x="90.15" y="586.8" width="1.25" height="27.4" fill="#696969"/>
<rect x="64.85" y="588.05" width="25.3" height="1.25" fill="#e3e3e3"/>
<rect x="64.85" y="588.05" width="1.25" height="24.9" fill="#e3e3e3"/>
<rect x="64.85" y="611.7" width="25.3" height="1.25" fill="#a0a0a0"/>
<rect x="88.9" y="588.05" width="1.25" height="24.9" fill="#a0a0a0"/>
<g transform="translate(63.6 587)">
<path d="M11 6.4 V20.6 L19.2 13.5Z" fill="#4470d0" stroke="#2d51ad" stroke-width="1" stroke-linejoin="round"/>
</g>
<rect x="92.5" y="586.8" width="27.8" height="27.4" fill="#f0f0f0"/>
<rect x="92.5" y="586.8" width="27.8" height="1.25" fill="#ffffff"/>
<rect x="92.5" y="586.8" width="1.25" height="27.4" fill="#ffffff"/>
<rect x="92.5" y="612.95" width="27.8" height="1.25" fill="#696969"/>
<rect x="119.05" y="586.8" width="1.25" height="27.4" fill="#696969"/>
<rect x="93.75" y="588.05" width="25.3" height="1.25" fill="#e3e3e3"/>
<rect x="93.75" y="588.05" width="1.25" height="24.9" fill="#e3e3e3"/>
<rect x="93.75" y="611.7" width="25.3" height="1.25" fill="#a0a0a0"/>
<rect x="117.8" y="588.05" width="1.25" height="24.9" fill="#a0a0a0"/>
<g transform="translate(92.5 587)">
<rect x="16.2" y="6.6" width="2.8" height="13.8" rx="1.2" fill="#4470d0" stroke="#2d51ad" stroke-width="1" stroke-linejoin="round"/>
<path d="M5.8 6.6 V20.6 L13.6 13.6Z" fill="#4470d0" stroke="#2d51ad" stroke-width="1" stroke-linejoin="round"/>
</g>
<rect x="121.4" y="586.8" width="27.8" height="27.4" fill="#f0f0f0"/>
<rect x="121.4" y="586.8" width="27.8" height="1.25" fill="#ffffff"/>
<rect x="121.4" y="586.8" width="1.25" height="27.4" fill="#ffffff"/>
<rect x="121.4" y="612.95" width="27.8" height="1.25" fill="#696969"/>
<rect x="147.95" y="586.8" width="1.25" height="27.4" fill="#696969"/>
<rect x="122.65" y="588.05" width="25.3" height="1.25" fill="#e3e3e3"/>
<rect x="122.65" y="588.05" width="1.25" height="24.9" fill="#e3e3e3"/>
<rect x="122.65" y="611.7" width="25.3" height="1.25" fill="#a0a0a0"/>
<rect x="146.7" y="588.05" width="1.25" height="24.9" fill="#a0a0a0"/>
<g transform="translate(121.4 587)">
<path d="M4.6 5.6 Q12.8 3.4 21 5.6 Q21.6 7.4 20 8.8 L15 13.6 V21.6 Q12.8 24.4 10.6 21.6 V13.6 L5.6 8.8 Q4 7.4 4.6 5.6Z" fill="#2b8cf0" stroke="#1a66cc" stroke-width="1"/>
<path d="M6 6.4 Q12.8 5 19.6 6.4" stroke="#8fc8ff" stroke-width="1.6" fill="none"/>
</g>
<rect x="202.2" y="585.2" width="745.1" height="30.2" fill="#f0f0f0"/>
<rect x="202.2" y="585.2" width="745.1" height="1.25" fill="#a0a0a0"/>
<rect x="202.2" y="585.2" width="1.25" height="30.2" fill="#a0a0a0"/>
<rect x="202.2" y="614.15" width="745.1" height="1.25" fill="#ffffff"/>
<rect x="946.05" y="585.2" width="1.25" height="30.2" fill="#ffffff"/>
<rect x="203.45" y="586.45" width="742.6" height="1.25" fill="#696969"/>
<rect x="203.45" y="586.45" width="1.25" height="27.7" fill="#696969"/>
<rect x="203.45" y="612.9" width="742.6" height="1.25" fill="#e3e3e3"/>
<rect x="944.8" y="586.45" width="1.25" height="27.7" fill="#e3e3e3"/>
<rect x="948.8" y="584.4" width="43.4" height="31" fill="#ff0000"/>
<rect x="948.8" y="584.4" width="43.4" height="1.2" fill="#a0a0a0"/>
<rect x="948.8" y="584.4" width="1.2" height="31" fill="#a0a0a0"/>
<rect x="950" y="585.6" width="42.2" height="1.2" fill="#6c6c6c"/>
<rect x="950" y="585.6" width="1.2" height="29.8" fill="#6c6c6c"/>
<rect x="951.2" y="614.15" width="41" height="1.25" fill="#fff"/>
<rect x="990.95" y="586.8" width="1.25" height="28.6" fill="#fff"/>
<text x="955" y="607" textLength="33.5" lengthAdjust="spacingAndGlyphs" fill="#100000">admin</text>
<rect x="993.8" y="584.4" width="36.4" height="31" fill="#ff0000"/>
<rect x="993.8" y="584.4" width="36.4" height="1.2" fill="#a0a0a0"/>
<rect x="993.8" y="584.4" width="1.2" height="31" fill="#a0a0a0"/>
<rect x="995" y="585.6" width="35.2" height="1.2" fill="#6c6c6c"/>
<rect x="995" y="585.6" width="1.2" height="29.8" fill="#6c6c6c"/>
<rect x="996.2" y="614.15" width="34" height="1.25" fill="#fff"/>
<rect x="1028.95" y="586.8" width="1.25" height="28.6" fill="#fff"/>
<text x="1000" y="607" textLength="26" lengthAdjust="spacingAndGlyphs" fill="#100000">SOA</text>
<rect x="1031.4" y="584.4" width="66.2" height="31" fill="#ff0000"/>
<rect x="1031.4" y="584.4" width="66.2" height="1.2" fill="#a0a0a0"/>
<rect x="1031.4" y="584.4" width="1.2" height="31" fill="#a0a0a0"/>
<rect x="1032.6" y="585.6" width="65" height="1.2" fill="#6c6c6c"/>
<rect x="1032.6" y="585.6" width="1.2" height="29.8" fill="#6c6c6c"/>
<rect x="1033.8" y="614.15" width="63.8" height="1.25" fill="#fff"/>
<rect x="1096.35" y="586.8" width="1.25" height="28.6" fill="#fff"/>
<text x="1038" y="607" textLength="57" lengthAdjust="spacingAndGlyphs" fill="#100000">4/2/2020</text>
<rect x="1101.3" y="584.4" width="27.7" height="31" fill="#f0f0f0"/>
<rect x="1101.3" y="584.4" width="27.7" height="1.2" fill="#a0a0a0"/>
<rect x="1101.3" y="584.4" width="1.2" height="31" fill="#a0a0a0"/>
<rect x="1102.5" y="585.6" width="26.5" height="1.2" fill="#6c6c6c"/>
<rect x="1102.5" y="585.6" width="1.2" height="29.8" fill="#6c6c6c"/>
<rect x="1103.7" y="614.15" width="25.3" height="1.25" fill="#fff"/>
<rect x="1127.75" y="586.8" width="1.25" height="28.6" fill="#fff"/>
<g transform="translate(1101 586)">
<rect x="4.6" y="3.6" width="15" height="18" rx="1" fill="#fbfbfb" stroke="#7d7d7d" stroke-width="1.2"/>
<path d="M5.4 5.4 H19 M5.4 9.2 H19 M5.4 13 H19 M5.4 16.8 H19 M5.4 20 H19" stroke="#a4a4a4" stroke-width="1.7"/>
<path d="M5.4 7.2 H12 M5.4 11 H11 M5.4 14.8 H10 M5.4 18.6 H9" stroke="#fff" stroke-width="1.6"/>
<path d="M21.4 4.4 L23.2 6 L13 20.4 L10.4 21.4 L11 18.6Z" fill="#ecc850" stroke="#7a6220" stroke-width=".9" stroke-linejoin="round"/>
<path d="M21.6 3 L24 5.2 L22.8 6.8 L20.4 4.6Z" fill="#e8504a"/>
<path d="M10.2 21.8 L12 19.4 L11 18.6Z" fill="#222"/>
</g>
<path d="M1152.3 600 L1139.4 612.8 M1152.3 605.2 L1144.6 612.8 M1152.3 610.2 L1149.6 612.8" stroke="#858585" stroke-width="1.9" fill="none"/>
</g>
</svg>
</body></html>
